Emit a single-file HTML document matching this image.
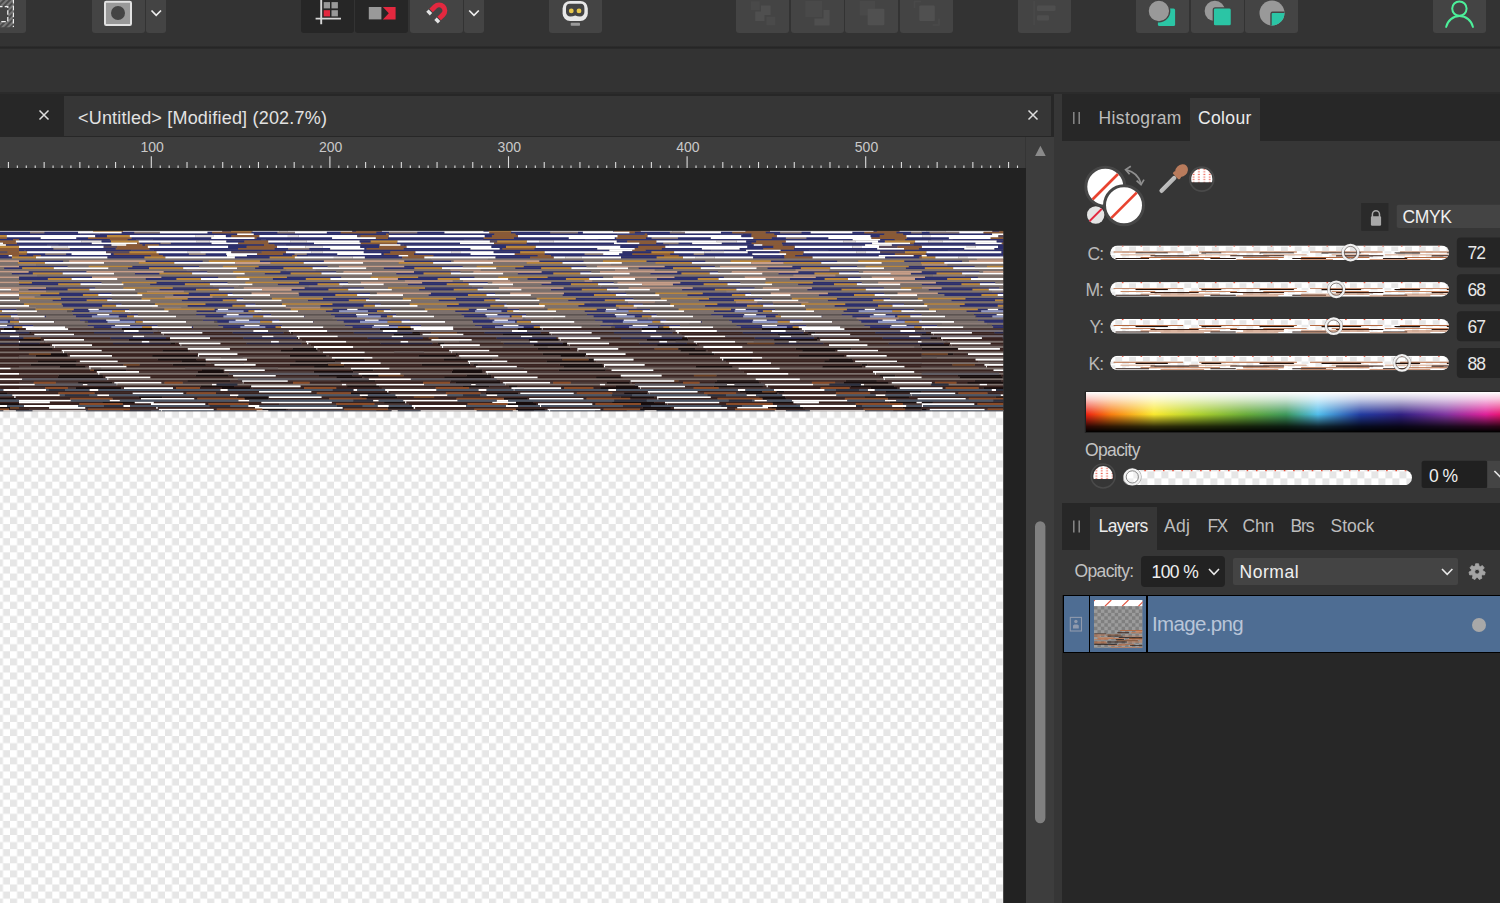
<!DOCTYPE html>
<html>
<head>
<meta charset="utf-8">
<title>Affinity Photo</title>
<style>
*{box-sizing:border-box;margin:0;padding:0}
html,body{width:1500px;height:903px;overflow:hidden;background:#333;font-family:"Liberation Sans",sans-serif;color:#ddd}
.abs{position:absolute}
#root{position:relative;width:1500px;height:903px;overflow:hidden;background:#333}
.btn{position:absolute;top:-3px;height:36px;width:53px;background:#444;border-radius:3px}
.btn.dark{background:#262626}
.btn.dd{width:20px}
.btn svg{position:absolute;left:0;top:3px}
.t{position:absolute;white-space:nowrap;line-height:1}
</style>
</head>
<body>
<div id="root">

<!-- ===== top toolbar ===== -->
<div class="abs" id="toolbar" style="left:0;top:0;width:1500px;height:47px;background:#333;overflow:hidden">
<!-- toolbar buttons -->
<div class="btn" style="left:-27px"></div>
<div class="btn" style="left:92px;width:52.5px"></div><div class="btn dd" style="left:146px;width:19.5px"></div>
<div class="btn dark" style="left:300.5px"></div><div class="btn dark" style="left:355px"></div>
<div class="btn" style="left:409.5px"></div><div class="btn dd" style="left:464px;width:19.5px"></div>
<div class="btn" style="left:549px;width:52.5px"></div>
<div class="btn" style="left:736px"></div><div class="btn" style="left:790.5px"></div><div class="btn" style="left:845px"></div><div class="btn" style="left:899.5px"></div>
<div class="btn" style="left:1018px"></div>
<div class="btn" style="left:1136px"></div><div class="btn" style="left:1190.5px"></div><div class="btn" style="left:1245px"></div>
<div class="btn" style="left:1433px"></div>
<svg class="abs" style="left:0;top:0" width="1500" height="47" viewBox="0 0 1500 47">
<defs>
<pattern id="hatch" width="4" height="4" patternUnits="userSpaceOnUse" patternTransform="rotate(-45)"><rect width="4" height="4" fill="#4a4a4a"/><rect width="4" height="2" fill="#787878"/></pattern>
<clipPath id="cN"><circle cx="1272" cy="13" r="12.5"/></clipPath>
</defs>
<!-- A marquee -->
<path d="M0,0H14V27.3H0V22.3H8.3V6H0Z" fill="url(#hatch)"/>
<path d="M-2,6.6H7.8V21.6H-2" fill="none" stroke="#eee" stroke-width="1.3" stroke-dasharray="4.5 2.2"/>
<path d="M13.4,-1V27" fill="none" stroke="#eee" stroke-width="1.2" stroke-dasharray="4.5 2.2"/>
<!-- B -->
<rect x="105" y="1.8" width="26" height="23.2" rx="1.2" fill="#999" stroke="#e2e2e2" stroke-width="2"/>
<circle cx="118" cy="13" r="7" fill="#444"/>
<path d="M151.5,10.5L156.2,15.3L161,10.5" fill="none" stroke="#eee" stroke-width="1.7"/>
<!-- C -->
<path d="M321.2,0V24.2M315.6,18.6H341" stroke="#d6d6d6" stroke-width="1.9" fill="none"/>
<rect x="323.7" y="2.1" width="6.3" height="6.3" fill="#999"/><rect x="331.5" y="2.1" width="6.4" height="6.3" fill="#999"/>
<rect x="323.7" y="10.2" width="6.3" height="6.2" fill="#e3283f"/><rect x="331.5" y="10.2" width="6.4" height="6.2" fill="#999"/>
<!-- D -->
<rect x="368.8" y="7" width="12.6" height="12.4" fill="#999"/>
<path d="M382.9,7H395.6V19.4H382.9L388.8,13.2Z" fill="#e3283f"/>
<!-- E magnet -->
<g transform="translate(439.1,10.6) rotate(45)"><path d="M-5.7,5.6V0A5.7,5.7 0 0 1 5.7,0V5.6" stroke="#e3283f" stroke-width="5" fill="none"/><path d="M-5.7,6.6V10M5.7,6.6V10" stroke="#e4e4e4" stroke-width="5" fill="none"/></g>
<path d="M469.2,10.5L474,15.3L478.8,10.5" fill="none" stroke="#eee" stroke-width="1.7"/>
<!-- F robot -->
<rect x="562.6" y="0.9" width="25.2" height="20" rx="7.5" fill="#e8e8e8"/>
<path d="M569.5,3.8H581A3.5,4.5 0 0 1 584.4,8.3V12A4.5,4.5 0 0 1 580,16.6Q577.5,16.6 575.2,15.5Q573,16.6 570.4,16.6A4.5,4.5 0 0 1 566,12V8.3A3.5,4.5 0 0 1 569.5,3.8Z" fill="#444"/>
<circle cx="571.3" cy="10.9" r="2.4" fill="#e8c84c"/><circle cx="579" cy="10.9" r="2.4" fill="#e8c84c"/>
<rect x="570.7" y="22.8" width="9.3" height="2.9" rx="0.6" fill="#9a9a9a"/>
<!-- G..K disabled -->
<rect x="750.8" y="1.2" width="8.8" height="8.8" fill="#494949"/><rect x="766.4" y="16.8" width="8.8" height="8.4" fill="#4a4a4a"/>
<path d="M761,5.6H770.6V15H764.5V21H755.2V11.5H761Z" fill="#4f4f4f"/>
<rect x="805.2" y="1" width="16.8" height="16" fill="#494949"/><path d="M823.5,10H829.6V25.6H814.4V18.5H823.5Z" fill="#4f4f4f"/>
<rect x="859.6" y="1" width="15.4" height="14.5" fill="#494949"/><rect x="867.6" y="8.8" width="16.8" height="16.5" rx="1" fill="#505050"/>
<path d="M914.5,8V1.5H921M932.5,25H939V18.5" fill="none" stroke="#494949" stroke-width="1.5"/><rect x="919.3" y="5.6" width="15.5" height="15.4" rx="1" fill="#505050"/>
<path d="M1034,1V25" stroke="#494949" stroke-width="1.6"/><rect x="1037" y="5.6" width="18.5" height="5.4" rx="1" fill="#4e4e4e"/><rect x="1037" y="15.2" width="12" height="5.3" rx="1" fill="#4e4e4e"/>
<!-- L -->
<rect x="1157.9" y="8.5" width="17.2" height="17.4" rx="1.5" fill="#2bc5a5"/>
<circle cx="1158.9" cy="11" r="10.8" fill="#999" stroke="#444" stroke-width="1.3"/>
<!-- M -->
<circle cx="1214.8" cy="11" r="10.2" fill="#999"/>
<rect x="1213.3" y="7.9" width="18.1" height="18" rx="2" fill="#2bc5a5" stroke="#444" stroke-width="1.3"/>
<!-- N -->
<circle cx="1272" cy="13" r="12.5" fill="#999"/>
<g clip-path="url(#cN)"><rect x="1271" y="12.3" width="20" height="20" rx="1.5" fill="#2bc5a5" stroke="#444" stroke-width="1.4"/></g>
<!-- O -->
<circle cx="1459.4" cy="8.6" r="7.2" fill="none" stroke="#4cf09a" stroke-width="2"/>
<path d="M1446.2,26.9A13.65,13.65 0 0 1 1472.9,26.9" fill="none" stroke="#4cf09a" stroke-width="2" stroke-linecap="round"/>
</svg>
</div>
<div class="abs" style="left:0;top:46px;width:1500px;height:3px;background:linear-gradient(#2e2e2e,#262626 50%,#2c2c2c)"></div>
<!-- context toolbar -->
<div class="abs" style="left:0;top:49px;width:1500px;height:44px;background:#333"></div>

<!-- ===== document tab bar ===== -->
<div class="abs" style="left:0;top:92px;width:1500px;height:46px;background:#272727"></div>
<div class="abs" style="left:0;top:92px;width:1500px;height:2px;background:#2b2b2b"></div>
<div class="abs" id="doctab" style="left:64px;top:96px;width:987px;height:40px;background:#363636"></div>


<svg class="abs" style="left:38px;top:109.3px" width="12" height="12"><path d="M1.5,1.5L10.5,10.5M10.5,1.5L1.5,10.5" stroke="#dedede" stroke-width="1.5" fill="none"/></svg>
<svg class="abs" style="left:1026.5px;top:109.3px" width="12" height="12"><path d="M1.5,1.5L10.5,10.5M10.5,1.5L1.5,10.5" stroke="#dedede" stroke-width="1.5" fill="none"/></svg>
<div class="t" id="doctitle" style="left:78px;top:108.5px;font-size:18px;letter-spacing:0.2px;color:#e2e2e2">&lt;Untitled&gt; [Modified] (202.7%)</div>
<!-- ruler -->
<div class="abs" id="ruler" style="left:0;top:137px;width:1026px;height:31px;background:#3d3d3d;overflow:hidden"><svg class="abs" style="left:0;top:0" width="1026" height="31"><path d="M-0.51,28.6V31M8.42,25.0V31M17.35,28.6V31M26.28,28.6V31M35.21,28.6V31M44.14,25.0V31M53.07,28.6V31M62.00,28.6V31M70.93,28.6V31M79.86,25.0V31M88.79,28.6V31M97.72,28.6V31M106.65,28.6V31M115.58,25.0V31M124.51,28.6V31M133.44,28.6V31M142.37,28.6V31M151.30,19.2V31M160.23,28.6V31M169.16,28.6V31M178.09,28.6V31M187.02,25.0V31M195.95,28.6V31M204.88,28.6V31M213.81,28.6V31M222.74,25.0V31M231.67,28.6V31M240.60,28.6V31M249.53,28.6V31M258.46,25.0V31M267.39,28.6V31M276.32,28.6V31M285.25,28.6V31M294.18,25.0V31M303.11,28.6V31M312.04,28.6V31M320.97,28.6V31M329.90,19.2V31M338.83,28.6V31M347.76,28.6V31M356.69,28.6V31M365.62,25.0V31M374.55,28.6V31M383.48,28.6V31M392.41,28.6V31M401.34,25.0V31M410.27,28.6V31M419.20,28.6V31M428.13,28.6V31M437.06,25.0V31M445.99,28.6V31M454.92,28.6V31M463.85,28.6V31M472.78,25.0V31M481.71,28.6V31M490.64,28.6V31M499.57,28.6V31M508.50,19.2V31M517.43,28.6V31M526.36,28.6V31M535.29,28.6V31M544.22,25.0V31M553.15,28.6V31M562.08,28.6V31M571.01,28.6V31M579.94,25.0V31M588.87,28.6V31M597.80,28.6V31M606.73,28.6V31M615.66,25.0V31M624.59,28.6V31M633.52,28.6V31M642.45,28.6V31M651.38,25.0V31M660.31,28.6V31M669.24,28.6V31M678.17,28.6V31M687.10,19.2V31M696.03,28.6V31M704.96,28.6V31M713.89,28.6V31M722.82,25.0V31M731.75,28.6V31M740.68,28.6V31M749.61,28.6V31M758.54,25.0V31M767.47,28.6V31M776.40,28.6V31M785.33,28.6V31M794.26,25.0V31M803.19,28.6V31M812.12,28.6V31M821.05,28.6V31M829.98,25.0V31M838.91,28.6V31M847.84,28.6V31M856.77,28.6V31M865.70,19.2V31M874.63,28.6V31M883.56,28.6V31M892.49,28.6V31M901.42,25.0V31M910.35,28.6V31M919.28,28.6V31M928.21,28.6V31M937.14,25.0V31M946.07,28.6V31M955.00,28.6V31M963.93,28.6V31M972.86,25.0V31M981.79,28.6V31M990.72,28.6V31M999.65,28.6V31M1008.58,25.0V31M1017.51,28.6V31" stroke="#dcdcdc" stroke-width="1.1" fill="none"/></svg><div class="t" style="left:132.1px;top:2.7px;width:40px;text-align:center;font-size:14px;color:#c9c9c9">100</div><div class="t" style="left:310.7px;top:2.7px;width:40px;text-align:center;font-size:14px;color:#c9c9c9">200</div><div class="t" style="left:489.3px;top:2.7px;width:40px;text-align:center;font-size:14px;color:#c9c9c9">300</div><div class="t" style="left:667.9px;top:2.7px;width:40px;text-align:center;font-size:14px;color:#c9c9c9">400</div><div class="t" style="left:846.5px;top:2.7px;width:40px;text-align:center;font-size:14px;color:#c9c9c9">500</div></div>
<!-- canvas bg -->
<div class="abs" id="canvas" style="left:0;top:168px;width:1026px;height:735px;background:#222;overflow:hidden"><!--GLITCH--><svg class="abs" style="left:0;top:0" width="1004" height="735" viewBox="0 168 1004 735"><defs><pattern id="ck" x="-4.04" y="411" width="14.086" height="14.134" patternUnits="userSpaceOnUse"><rect width="14.1" height="14.2" fill="#fff"/><rect x="7.043" width="7.043" height="7.067" fill="#e6e6e6"/><rect y="7.067" width="7.043" height="7.067" fill="#e6e6e6"/></pattern></defs><rect x="0" y="410" width="1003.2" height="494" fill="url(#ck)"/><rect x="0" y="231" width="1003.2" height="180.3" fill="#6f6462"/><path d="M0.0,231.42H19.0M19.0,231.42H93.2M123.0,231.42H222.3M252.4,231.42H279.3M287.7,231.42H352.3M381.8,231.42H483.6M511.2,231.42H613.2M640.6,231.42H672.3M681.1,231.42H745.6M770.0,231.42H873.6M899.4,231.42H921.7M921.7,231.42H926.1M945.7,231.42H992.4" stroke="#ffffff" stroke-width="0.84" fill="none"/><path d="M93.2,231.42H123.0M231.0,231.42H252.4M488.6,231.42H511.2" stroke="#bb873c" stroke-width="0.84" fill="none"/><path d="M222.3,231.42H231.0M745.6,231.42H746.1" stroke="#5a4a5a" stroke-width="0.84" fill="none"/><path d="M279.3,231.42H287.7M672.3,231.42H681.1M926.1,231.42H945.7" stroke="#e4e0de" stroke-width="0.84" fill="none"/><path d="M352.3,231.42H356.1M483.6,231.42H488.6M613.2,231.42H614.2M873.6,231.42H876.9M992.4,231.42H999.2" stroke="#2c2f6d" stroke-width="0.84" fill="none"/><path d="M356.1,231.42H381.8M614.2,231.42H640.6M746.1,231.42H770.0M876.9,231.42H899.4M999.2,231.42H1003.2" stroke="#8a5a36" stroke-width="0.84" fill="none"/><path d="M0.0,232.65H1.1M1.1,232.65H19.0M19.0,232.65H30.1M44.3,232.65H78.1M121.6,232.65H124.1M124.1,232.65H134.4M207.4,232.65H212.2M251.3,232.65H253.5M253.5,232.65H277.5M326.8,232.65H340.8M376.2,232.65H382.9M382.9,232.65H389.0M417.2,232.65H444.5M511.0,232.65H512.3M512.3,232.65H550.3M577.9,232.65H582.9M634.7,232.65H641.7M641.7,232.65H669.9M720.9,232.65H732.3M765.5,232.65H771.1M771.1,232.65H780.2M801.4,232.65H810.7M852.3,232.65H864.4M896.3,232.65H900.5M900.5,232.65H911.2M921.7,232.65H929.7M6.7,238.01H10.0M10.0,238.01H19.0M19.0,238.01H40.7M76.2,238.01H88.0M131.4,238.01H133.0M133.0,238.01H211.3M256.4,238.01H262.4M262.4,238.01H332.1M388.0,238.01H391.8M391.8,238.01H483.8M513.9,238.01H521.2M521.2,238.01H568.8M614.7,238.01H616.3M645.9,238.01H650.6M650.6,238.01H651.7M677.9,238.01H710.8M771.6,238.01H780.0M780.0,238.01H785.9M806.3,238.01H828.4M906.8,238.01H909.4M909.4,238.01H921.7M921.7,238.01H948.9M17.0,243.37H18.9M19.0,243.37H91.8M139.4,243.37H141.9M141.9,243.37H160.6M170.8,243.37H211.6M268.4,243.37H271.3M271.3,243.37H314.0M396.8,243.37H400.7M400.7,243.37H460.0M526.4,243.37H530.1M530.1,243.37H614.0M656.1,243.37H659.5M659.5,243.37H663.4M678.4,243.37H692.2M721.7,243.37H751.7M781.9,243.37H788.9M788.9,243.37H872.1M913.7,243.37H918.3M918.3,243.37H921.7M921.7,243.37H975.5M19.0,248.73H21.4M21.4,248.73H53.5M69.6,248.73H115.8M149.3,248.73H150.8M150.8,248.73H238.0M274.4,248.73H280.2M280.2,248.73H288.0M309.2,248.73H330.2M364.3,248.73H366.6M403.5,248.73H409.6M409.6,248.73H470.5M499.6,248.73H502.5M534.3,248.73H539.0M539.0,248.73H597.3M661.6,248.73H668.4M668.4,248.73H701.9M739.5,248.73H763.4M794.0,248.73H797.8M797.8,248.73H877.2M918.8,248.73H921.7M921.7,248.73H964.3M994.3,248.73H1003.2M26.5,254.09H30.3M30.3,254.09H45.3M66.1,254.09H71.6M110.8,254.09H113.8M158.6,254.09H159.7M159.7,254.09H188.9M205.5,254.09H226.3M282.8,254.09H289.1M289.1,254.09H294.7M306.6,254.09H337.3M381.3,254.09H383.8M414.0,254.09H418.5M418.5,254.09H470.6M544.5,254.09H547.9M547.9,254.09H584.7M619.1,254.09H632.4M670.1,254.09H677.3M677.3,254.09H693.8M704.1,254.09H752.4M802.8,254.09H806.7M806.7,254.09H894.9M925.5,254.09H929.7M929.7,254.09H1003.0" stroke="#2c2f6d" stroke-width="2.0" fill="none"/><path d="M30.1,232.65H44.3M134.4,232.65H159.9M277.5,232.65H295.0M389.0,232.65H417.2M550.3,232.65H577.9M669.9,232.65H685.0M780.2,232.65H801.4M911.2,232.65H921.7M929.7,232.65H959.3M651.7,238.01H677.9M785.9,238.01H806.3M160.6,243.37H170.8M663.4,243.37H678.4M53.5,248.73H69.6M288.0,248.73H309.2M45.3,254.09H66.1M188.9,254.09H205.5M294.7,254.09H306.6M584.7,254.09H603.2M693.8,254.09H704.1" stroke="#8a7a78" stroke-width="2.0" fill="none"/><path d="M78.1,232.65H121.6M159.9,232.65H207.4M295.0,232.65H326.8M444.5,232.65H489.4M582.9,232.65H629.6M685.0,232.65H720.9M810.7,232.65H852.3M959.3,232.65H983.6M40.7,238.01H76.2M211.3,238.01H254.7M332.1,238.01H375.9M568.8,238.01H614.7M710.8,238.01H753.5M828.4,238.01H871.5M948.9,238.01H990.7M0.0,243.37H3.0M91.8,243.37H137.0M211.6,243.37H238.2M314.0,243.37H360.8M460.0,243.37H494.0M614.0,243.37H639.5M692.2,243.37H721.7M872.1,243.37H910.1M975.5,243.37H1001.8M330.2,248.73H364.3M470.5,248.73H499.6M597.3,248.73H634.8M701.9,248.73H739.5M877.2,248.73H904.2M964.3,248.73H994.3M71.6,254.09H110.8M226.3,254.09H257.2M337.3,254.09H381.3M470.6,254.09H514.8M603.2,254.09H619.1M752.4,254.09H786.3M26.0,329.03H68.2M413.5,329.03H453.4M542.4,329.03H542.9M801.7,329.03H844.6M924.3,329.03H924.7M34.2,334.39H74.0M162.7,334.39H163.6M422.4,334.39H463.5M551.3,334.39H551.8M811.2,334.39H850.3M933.1,334.39H933.6M44.0,339.75H84.0M431.3,339.75H471.8M559.7,339.75H560.7M820.1,339.75H859.4M942.1,339.75H942.5M52.0,345.11H92.1M180.4,345.11H181.4M440.2,345.11H479.9M569.1,345.11H569.6M829.0,345.11H867.6M951.1,345.11H951.4M61.6,350.47H101.8M449.1,350.47H489.4M577.3,350.47H578.5M837.3,350.47H878.1M69.8,355.83H112.0M197.9,355.83H199.2M459.1,355.83H498.4M846.4,355.83H886.8M79.7,361.19H117.8M467.7,361.19H507.4M855.1,361.19H897.0M88.7,366.55H126.6M475.8,366.55H516.9M604.0,366.55H605.2M865.3,366.55H904.6M986.1,366.55H987.0M96.8,371.91H139.1M485.6,371.91H527.3M872.9,371.91H914.4M105.4,377.27H150.5M494.1,377.27H537.7M882.9,377.27H921.7M114.2,382.63H161.5M242.7,382.63H243.6M503.1,382.63H550.2M891.5,382.63H921.7M921.7,382.63H931.9M123.9,387.99H173.0M511.3,387.99H561.2M640.0,387.99H640.7M899.7,387.99H921.7M921.7,387.99H942.7M132.5,393.35H183.5M520.2,393.35H573.8M649.1,393.35H649.6M909.8,393.35H921.7M921.7,393.35H955.4M140.9,398.71H194.4M529.1,398.71H583.6M657.2,398.71H658.5M917.6,398.71H921.7M921.7,398.71H965.8M150.9,404.07H205.5M538.0,404.07H592.5M667.0,404.07H667.4M921.7,404.07H974.5M158.8,409.43H213.8M547.4,409.43H600.6M929.6,409.43H984.7" stroke="#ffffff" stroke-width="2.0" fill="none"/><path d="M212.2,232.65H251.3M340.8,232.65H376.2M489.4,232.65H511.0M629.6,232.65H634.7M732.3,232.65H765.5M864.4,232.65H896.3M983.6,232.65H1003.2M0.0,238.01H6.7M88.0,238.01H131.4M254.7,238.01H256.4M375.9,238.01H388.0M483.8,238.01H513.9M616.3,238.01H645.9M753.5,238.01H771.6M871.5,238.01H906.8M990.7,238.01H1003.2M3.0,243.37H17.0M137.0,243.37H139.4M238.2,243.37H268.4M360.8,243.37H396.8M494.0,243.37H526.4M639.5,243.37H656.1M751.7,243.37H781.9M910.1,243.37H913.7M1001.8,243.37H1003.2M0.0,248.73H19.0M115.8,248.73H149.3M238.0,248.73H274.4M366.6,248.73H403.5M502.5,248.73H534.3M634.8,248.73H661.6M763.4,248.73H794.0M904.2,248.73H918.8M0.0,254.09H19.0M19.0,254.09H26.5M113.8,254.09H158.6M257.2,254.09H282.8M383.8,254.09H414.0M514.8,254.09H544.5M632.4,254.09H670.1M786.3,254.09H802.8M894.9,254.09H921.7M921.7,254.09H925.5" stroke="#8a5a36" stroke-width="2.0" fill="none"/><path d="M0.0,234.38H4.2M4.2,234.38H19.0M19.0,234.38H80.2M99.8,234.38H127.2M127.2,234.38H237.2M253.7,234.38H256.6M256.6,234.38H386.0M388.5,234.38H494.4M515.6,234.38H617.7M647.1,234.38H720.2M742.4,234.38H751.6M774.2,234.38H884.4M903.1,234.38H903.6M903.6,234.38H921.7M921.7,234.38H992.1M0.0,239.73H13.1M19.0,239.73H109.9M127.4,239.73H136.1M152.5,239.73H261.6M265.5,239.73H394.9M394.9,239.73H464.6M482.9,239.73H524.3M524.3,239.73H585.6M598.1,239.73H653.7M653.7,239.73H783.1M783.1,239.73H852.7M880.1,239.73H894.8M905.1,239.73H912.5M912.5,239.73H921.7M921.7,239.73H931.7M952.3,239.73H1003.2M5.9,245.09H19.0M19.0,245.09H47.3M58.2,245.09H111.5M142.3,245.09H145.0M158.8,245.09H264.0M285.8,245.09H379.7M403.8,245.09H533.2M533.2,245.09H662.6M662.6,245.09H669.4M689.9,245.09H753.8M782.5,245.09H792.0M792.0,245.09H865.1M891.8,245.09H892.7M913.3,245.09H921.4M921.7,245.09H1003.2M19.0,250.45H24.5M25.4,250.45H131.4M153.9,250.45H283.3M283.3,250.45H412.7M412.7,250.45H542.1M542.1,250.45H609.4M645.5,250.45H671.5M671.5,250.45H711.4M723.7,250.45H746.1M780.5,250.45H800.9M800.9,250.45H809.0M828.2,250.45H921.7M921.7,250.45H923.9M923.9,250.45H947.9M963.5,250.45H1003.2M0.0,255.81H8.7M19.0,255.81H33.4M40.9,255.81H150.9M162.8,255.81H227.0M246.9,255.81H292.2M297.0,255.81H308.3M337.7,255.81H398.7M433.3,255.81H537.8M551.0,255.81H664.3M678.6,255.81H680.4M680.4,255.81H754.6M781.3,255.81H784.0M795.1,255.81H809.8M809.8,255.81H878.8M913.6,255.81H921.7M926.7,255.81H932.8M932.8,255.81H1000.1M19.0,261.17H42.3M42.3,261.17H63.3M145.5,261.17H171.7M171.7,261.17H202.8M259.9,261.17H301.1M301.1,261.17H323.9M404.2,261.17H430.5M430.5,261.17H451.2M539.3,261.17H559.9M559.9,261.17H583.7M646.4,261.17H689.3M689.3,261.17H705.5M770.8,261.17H818.7M818.7,261.17H837.3M904.2,261.17H921.7M921.7,261.17H941.7M941.7,261.17H962.2M19.0,266.53H51.2M51.2,266.53H67.7M132.3,266.53H180.6M180.6,266.53H199.2M258.6,266.53H310.0M310.0,266.53H327.7M404.2,266.53H439.4M439.4,266.53H462.8M523.7,266.53H568.8M568.8,266.53H586.6M664.6,266.53H698.2M698.2,266.53H714.9M792.3,266.53H827.6M827.6,266.53H857.1M908.7,266.53H921.7M921.7,266.53H950.6M950.6,266.53H974.8M28.6,271.89H60.1M60.1,271.89H86.5M163.6,271.89H189.5M189.5,271.89H207.3M280.4,271.89H318.9M318.9,271.89H336.3M414.0,271.89H448.3M448.3,271.89H460.6M541.6,271.89H577.7M577.7,271.89H591.4M677.2,271.89H707.1M707.1,271.89H718.1M798.3,271.89H836.5M836.5,271.89H858.9M921.7,271.89H959.5M959.5,271.89H979.5M19.2,277.25H69.0M69.0,277.25H92.0M161.3,277.25H198.4M198.4,277.25H218.2M286.9,277.25H327.8M327.8,277.25H341.3M418.1,277.25H457.2M457.2,277.25H474.6M547.5,277.25H586.6M586.6,277.25H603.3M674.4,277.25H716.0M716.0,277.25H723.9M815.7,277.25H845.4M845.4,277.25H860.8M925.0,277.25H968.4M968.4,277.25H977.9M31.9,282.61H77.9M77.9,282.61H101.6M156.5,282.61H207.3M207.3,282.61H227.6M298.9,282.61H336.7M336.7,282.61H348.0M422.1,282.61H466.1M466.1,282.61H487.8M551.2,282.61H595.5M595.5,282.61H613.8M680.3,282.61H724.9M724.9,282.61H740.4M812.8,282.61H854.3M854.3,282.61H861.8M935.9,282.61H977.3M977.3,282.61H995.3M46.0,287.97H86.8M86.8,287.97H95.2M172.7,287.97H216.2M216.2,287.97H234.2M304.6,287.97H345.6M345.6,287.97H364.1M425.0,287.97H475.0M475.0,287.97H483.3M563.6,287.97H604.4M604.4,287.97H618.5M692.7,287.97H733.8M733.8,287.97H754.7M811.9,287.97H863.2M863.2,287.97H883.9M941.6,287.97H986.2M986.2,287.97H999.4M59.2,293.33H95.7M95.7,293.33H111.6M188.7,293.33H225.1M225.1,293.33H232.7M298.6,293.33H354.5M354.5,293.33H370.1M430.9,293.33H483.9M483.9,293.33H495.0M563.9,293.33H613.3M613.3,293.33H626.5M702.7,293.33H742.7M742.7,293.33H751.0M827.9,293.33H872.1M872.1,293.33H884.4M937.8,293.33H995.1M995.1,293.33H1003.2M61.0,298.69H104.6M104.6,298.69H111.9M187.6,298.69H234.0M234.0,298.69H243.4M323.0,298.69H363.4M363.4,298.69H369.1M455.9,298.69H492.8M492.8,298.69H499.8M575.7,298.69H622.2M622.2,298.69H633.6M709.0,298.69H751.6M751.6,298.69H762.2M836.9,298.69H881.0M881.0,298.69H890.5M965.4,298.69H1003.2M61.6,304.05H113.5M113.5,304.05H121.6M205.4,304.05H242.9M242.9,304.05H255.4M332.4,304.05H372.3M372.3,304.05H380.8M458.7,304.05H501.7M501.7,304.05H506.6M584.3,304.05H631.1M631.1,304.05H642.8M717.3,304.05H760.5M760.5,304.05H773.3M845.2,304.05H889.9M889.9,304.05H904.0M964.6,304.05H1003.2M0.0,309.41H16.6M73.7,309.41H88.4M98.7,309.41H122.4M122.4,309.41H129.2M214.5,309.41H217.8M228.1,309.41H251.8M251.8,309.41H261.6M332.5,309.41H347.2M357.5,309.41H381.2M381.2,309.41H390.8M468.7,309.41H476.6M486.9,309.41H510.6M510.6,309.41H519.2M596.6,309.41H606.0M616.3,309.41H640.0M640.0,309.41H650.2M731.0,309.41H735.4M745.7,309.41H769.4M769.4,309.41H775.0M846.9,309.41H864.8M875.1,309.41H898.8M898.8,309.41H914.4M977.8,309.41H987.8M998.1,309.41H1003.2M0.0,314.77H8.3M8.3,314.77H17.7M72.8,314.77H97.3M109.2,314.77H131.3M131.3,314.77H137.9M196.1,314.77H226.7M238.6,314.77H260.7M260.7,314.77H271.3M331.0,314.77H356.1M368.0,314.77H390.1M390.1,314.77H396.1M461.3,314.77H485.5M497.4,314.77H519.5M519.5,314.77H526.0M586.9,314.77H614.9M626.8,314.77H648.9M648.9,314.77H656.7M711.1,314.77H744.3M756.2,314.77H778.3M841.4,314.77H873.7M885.6,314.77H907.7M907.7,314.77H921.7M973.9,314.77H996.7M0.0,320.13H17.2M17.2,320.13H19.0M19.0,320.13H19.9M79.8,320.13H106.2M119.7,320.13H140.2M140.2,320.13H143.2M202.7,320.13H235.6M249.1,320.13H269.6M269.6,320.13H279.1M336.8,320.13H365.0M378.5,320.13H399.0M399.0,320.13H410.0M472.0,320.13H494.4M507.9,320.13H528.4M528.4,320.13H530.7M595.1,320.13H623.8M637.3,320.13H657.8M657.8,320.13H666.2M728.8,320.13H753.2M766.7,320.13H787.2M787.2,320.13H802.7M858.5,320.13H882.6M896.1,320.13H916.6M916.6,320.13H921.7M977.6,320.13H1003.2M7.1,325.49H19.0M19.0,325.49H19.7M19.7,325.49H33.4M87.4,325.49H115.1M130.1,325.49H149.1M149.1,325.49H157.7M218.2,325.49H244.5M259.5,325.49H278.5M278.5,325.49H282.2M344.8,325.49H373.9M388.9,325.49H407.9M407.9,325.49H421.1M475.0,325.49H503.3M518.3,325.49H537.3M537.3,325.49H540.0M600.2,325.49H632.7M647.7,325.49H666.7M666.7,325.49H680.1M736.3,325.49H762.1M777.1,325.49H796.1M796.1,325.49H806.4M864.2,325.49H891.5M906.5,325.49H921.7M921.7,325.49H937.2M991.8,325.49H1003.2" stroke="#2c2f6d" stroke-width="1.65" fill="none"/><path d="M80.2,234.38H99.8M617.7,234.38H644.8M720.2,234.38H742.4M136.1,239.73H152.5M261.6,239.73H265.5M464.6,239.73H482.9M585.6,239.73H598.1M931.7,239.73H952.3M47.3,245.09H58.2M274.4,245.09H285.8M400.4,245.09H403.8M669.4,245.09H689.9M892.7,245.09H913.3M24.5,250.45H25.4M131.4,250.45H153.9M711.4,250.45H723.7M809.0,250.45H828.2M947.9,250.45H963.5M308.3,255.81H337.7M754.6,255.81H781.3M1000.1,255.81H1003.2" stroke="#3d3f78" stroke-width="1.65" fill="none"/><path d="M237.2,234.38H253.7M992.1,234.38H1003.2M852.7,239.73H880.1M0.0,245.09H5.9M111.5,245.09H126.4M379.7,245.09H400.4M753.8,245.09H762.5M865.1,245.09H891.8M609.4,250.45H632.4M746.1,250.45H780.5M8.7,255.81H12.3M227.0,255.81H246.9M398.7,255.81H408.3M878.8,255.81H913.6M921.7,255.81H926.7M88.4,309.41H98.7M217.8,309.41H228.1M347.2,309.41H357.5M476.6,309.41H486.9M606.0,309.41H616.3M735.4,309.41H745.7M864.8,309.41H875.1M987.8,309.41H998.1M97.3,314.77H109.2M226.7,314.77H238.6M356.1,314.77H368.0M485.5,314.77H497.4M614.9,314.77H626.8M744.3,314.77H756.2M873.7,314.77H885.6M996.7,314.77H1003.2M106.2,320.13H119.7M235.6,320.13H249.1M365.0,320.13H378.5M494.4,320.13H507.9M623.8,320.13H637.3M753.2,320.13H766.7M882.6,320.13H896.1M0.0,325.49H7.1M115.1,325.49H130.1M244.5,325.49H259.5M373.9,325.49H388.9M503.3,325.49H518.3M632.7,325.49H647.7M762.1,325.49H777.1M891.5,325.49H906.5" stroke="#ffffff" stroke-width="1.65" fill="none"/><path d="M386.0,234.38H388.5M494.4,234.38H515.4M644.8,234.38H647.1M751.6,234.38H774.2M884.4,234.38H903.1M13.1,239.73H19.0M109.9,239.73H127.4M894.8,239.73H905.1M126.4,245.09H142.3M145.0,245.09H158.8M264.0,245.09H274.4M762.5,245.09H782.5M0.0,250.45H19.0M632.4,250.45H645.5M12.3,255.81H19.0M33.4,255.81H40.9M150.9,255.81H162.8M292.2,255.81H297.0M408.3,255.81H421.6M421.6,255.81H433.3M537.8,255.81H551.0M664.3,255.81H678.6M784.0,255.81H795.1" stroke="#8a5a36" stroke-width="1.65" fill="none"/><path d="M0.0,236.15H6.8M106.9,236.15H129.8M110.9,241.51H138.7M370.5,241.51H397.5M497.1,241.51H526.9M884.7,241.51H915.1M0.0,246.87H19.0M506.0,246.87H535.8M19.0,252.23H27.1M129.3,252.23H156.5M520.1,252.23H544.7M651.3,252.23H674.1M904.9,252.23H921.7M921.7,252.23H926.5M11.8,257.59H19.0M19.0,257.59H36.0M144.3,257.59H165.4M269.5,257.59H294.8M656.5,257.59H683.0M921.7,257.59H935.4M17.6,262.95H19.0M19.0,262.95H44.9M138.5,262.95H174.3M270.4,262.95H303.7M398.4,262.95H433.1M526.4,262.95H562.5M655.2,262.95H691.9M783.5,262.95H821.3M920.8,262.95H921.7M921.7,262.95H944.3M22.1,268.31H53.8M149.0,268.31H183.2M283.3,268.31H312.6M414.2,268.31H442.0M541.1,268.31H571.4M673.0,268.31H700.8M800.8,268.31H830.2M924.7,268.31H953.2M32.7,273.67H62.7M159.3,273.67H192.1M290.5,273.67H321.5M423.4,273.67H450.9M553.2,273.67H580.3M681.3,273.67H709.7M814.3,273.67H839.1M936.4,273.67H962.1M47.7,279.03H71.6M176.3,279.03H201.0M305.7,279.03H330.4M437.5,279.03H459.8M565.9,279.03H589.2M697.6,279.03H718.6M824.5,279.03H848.0M947.1,279.03H971.0M58.1,284.39H80.5M184.8,284.39H209.9M317.4,284.39H339.3M446.6,284.39H468.7M570.9,284.39H598.1M703.5,284.39H727.5M834.0,284.39H856.9M961.3,284.39H979.9M67.5,289.75H89.4M196.0,289.75H218.8M328.3,289.75H348.2M453.6,289.75H477.6M581.7,289.75H607.0M714.8,289.75H736.4M841.4,289.75H865.8M972.3,289.75H988.8M82.8,295.11H98.3M209.8,295.11H227.7M335.2,295.11H357.1M467.9,295.11H486.5M593.9,295.11H615.9M731.8,295.11H745.3M854.0,295.11H874.7M981.3,295.11H997.7M86.5,300.47H107.2M222.6,300.47H236.6M348.7,300.47H366.0M484.1,300.47H495.4M604.7,300.47H624.8M734.0,300.47H754.2M872.7,300.47H883.6M995.0,300.47H1003.2M102.1,305.83H116.1M232.3,305.83H245.5M363.5,305.83H374.9M490.2,305.83H504.3M615.8,305.83H633.7M746.9,305.83H763.1M878.0,305.83H892.5M997.6,305.83H1003.2M0.0,311.19H2.0M112.1,311.19H125.0M248.3,311.19H254.4M377.0,311.19H383.8M507.1,311.19H513.2M628.6,311.19H642.6M762.8,311.19H772.0M892.2,311.19H901.4M0.0,316.55H10.9M127.0,316.55H133.9M252.9,316.55H263.3M386.9,316.55H392.7M511.4,316.55H522.1M641.8,316.55H651.5M775.4,316.55H780.9M897.3,316.55H910.3M9.9,321.91H19.0M135.6,321.91H142.8M260.1,321.91H272.2M387.4,321.91H401.6M516.6,321.91H531.0M652.3,321.91H660.4M777.5,321.91H789.8M904.7,321.91H919.2M13.7,327.27H19.0M19.0,327.27H22.3M142.1,327.27H151.7M275.4,327.27H281.1M398.0,327.27H410.5M533.6,327.27H539.9M663.2,327.27H669.3M792.5,327.27H798.7M914.2,327.27H921.7" stroke="#bb873c" stroke-width="2.1" fill="none"/><path d="M6.8,236.15H19.0M19.0,236.15H95.3M129.8,236.15H195.1M213.3,236.15H225.9M259.2,236.15H287.9M298.5,236.15H357.2M388.6,236.15H484.8M518.0,236.15H617.7M647.4,236.15H741.4M776.8,236.15H870.7M906.2,236.15H921.7M921.7,236.15H922.1M930.2,236.15H998.4M15.7,241.51H19.0M19.0,241.51H81.5M100.2,241.51H101.6M138.7,241.51H196.7M209.8,241.51H226.4M268.1,241.51H290.5M306.7,241.51H359.7M397.5,241.51H489.9M526.9,241.51H539.1M553.8,241.51H616.8M656.3,241.51H716.7M736.6,241.51H746.3M785.7,241.51H843.5M855.4,241.51H878.2M915.1,241.51H921.7M921.7,241.51H928.3M942.4,241.51H996.7M19.0,246.87H51.8M67.3,246.87H103.7M147.6,246.87H228.2M277.0,246.87H305.3M322.3,246.87H360.3M406.4,246.87H491.5M535.8,246.87H620.4M665.2,246.87H747.4M794.6,246.87H852.3M861.2,246.87H879.1M921.7,246.87H966.8M975.7,246.87H998.1M27.1,252.23H106.0M156.5,252.23H187.7M200.1,252.23H231.3M285.9,252.23H311.3M322.4,252.23H363.8M415.3,252.23H451.2M461.0,252.23H493.7M544.7,252.23H622.5M674.1,252.23H704.6M724.0,252.23H747.8M803.5,252.23H856.3M865.4,252.23H880.2M926.5,252.23H1001.5M36.0,257.59H107.5M165.4,257.59H234.9M294.8,257.59H333.9M352.7,257.59H364.9M424.2,257.59H495.6M553.6,257.59H565.5M581.9,257.59H621.0M683.0,257.59H695.7M714.7,257.59H753.2M812.4,257.59H885.2M935.4,257.59H958.5M967.2,257.59H1003.2M44.9,262.95H104.1M174.3,262.95H235.4M303.7,262.95H363.3M433.1,262.95H493.1M562.5,262.95H621.9M691.9,262.95H751.3M821.3,262.95H881.8M944.3,262.95H1003.2M53.8,268.31H108.5M183.2,268.31H237.2M312.6,268.31H366.4M442.0,268.31H496.4M571.4,268.31H628.0M700.8,268.31H756.7M830.2,268.31H884.1M953.2,268.31H1003.2M62.7,273.67H114.1M192.1,273.67H244.8M321.5,273.67H372.1M450.9,273.67H503.3M580.3,273.67H629.8M709.7,273.67H762.5M839.1,273.67H890.8M962.1,273.67H1003.2M71.6,279.03H117.5M201.0,279.03H249.6M330.4,279.03H378.3M459.8,279.03H508.3M589.2,279.03H635.2M718.6,279.03H765.8M848.0,279.03H894.2M971.0,279.03H1003.2M80.5,284.39H123.6M209.9,284.39H252.6M339.3,284.39H383.8M468.7,284.39H513.1M598.1,284.39H642.1M727.5,284.39H772.2M856.9,284.39H900.4M979.9,284.39H1003.2M0.0,289.75H11.2M89.4,289.75H135.4M218.8,289.75H262.0M348.2,289.75H391.9M477.6,289.75H521.6M607.0,289.75H649.9M736.4,289.75H779.5M865.8,289.75H911.5M988.8,289.75H1003.2M0.0,295.11H19.0M98.3,295.11H142.5M227.7,295.11H270.1M357.1,295.11H403.0M486.5,295.11H530.9M615.9,295.11H659.5M745.3,295.11H790.6M874.7,295.11H917.3M997.7,295.11H1003.2M0.0,300.47H19.0M19.0,300.47H20.1M107.2,300.47H150.5M236.6,300.47H281.7M366.0,300.47H411.0M495.4,300.47H539.6M624.8,300.47H666.9M754.2,300.47H798.5M883.6,300.47H921.7M921.7,300.47H922.8M0.0,305.83H19.0M19.0,305.83H29.1M116.1,305.83H157.9M245.5,305.83H285.9M374.9,305.83H417.7M504.3,305.83H544.9M633.7,305.83H674.1M763.1,305.83H805.2M892.5,305.83H921.7M921.7,305.83H927.5M2.0,311.19H19.0M19.0,311.19H36.9M125.0,311.19H168.7M254.4,311.19H298.1M383.8,311.19H427.6M513.2,311.19H556.2M642.6,311.19H684.2M772.0,311.19H814.1M901.4,311.19H921.7M921.7,311.19H936.0M10.9,316.55H19.0M19.0,316.55H44.8M133.9,316.55H176.0M263.3,316.55H304.2M392.7,316.55H434.0M522.1,316.55H565.5M651.5,316.55H693.1M780.9,316.55H821.7M910.3,316.55H921.7M921.7,316.55H945.1M19.0,321.91H54.2M142.8,321.91H186.0M272.2,321.91H313.1M401.6,321.91H445.2M531.0,321.91H574.5M660.4,321.91H700.9M789.8,321.91H832.0M919.2,321.91H921.7M921.7,321.91H954.0M22.3,327.27H65.1M151.7,327.27H191.9M281.1,327.27H323.4M410.5,327.27H453.3M539.9,327.27H581.7M669.3,327.27H713.2M798.7,327.27H840.3M921.7,327.27H963.4M0.8,330.98H15.8M123.8,330.98H138.8M253.2,330.98H268.2M288.6,330.98H327.3M382.6,330.98H397.6M512.0,330.98H527.0M641.4,330.98H656.4M675.4,330.98H716.9M770.8,330.98H785.8M803.8,330.98H804.8M900.2,330.98H915.2M9.7,336.34H19.0M132.7,336.34H144.2M262.1,336.34H273.6M296.5,336.34H337.8M391.5,336.34H403.0M520.9,336.34H532.4M650.3,336.34H661.8M684.3,336.34H725.3M779.7,336.34H791.2M813.4,336.34H813.7M909.1,336.34H920.6M18.6,341.70H19.0M19.0,341.70H20.1M45.7,341.70H46.2M141.6,341.70H149.5M271.0,341.70H278.9M305.8,341.70H346.3M400.4,341.70H408.3M529.8,341.70H537.7M659.2,341.70H667.1M693.6,341.70H735.2M788.6,341.70H796.5M918.0,341.70H921.7M54.2,347.06H55.1M313.9,347.06H353.3M442.0,347.06H443.3M703.2,347.06H742.6M62.9,352.42H64.0M322.8,352.42H364.8M451.2,352.42H452.2M711.6,352.42H752.9M331.7,357.78H372.6M719.9,357.78H762.3M848.8,357.78H849.3M340.6,363.14H380.8M468.7,363.14H470.0M729.1,363.14H771.1M0.0,368.50H10.7M89.3,368.50H90.7M350.7,368.50H389.6M738.4,368.50H779.8M0.0,373.86H19.0M98.1,373.86H99.6M358.4,373.86H400.6M487.1,373.86H487.8M746.6,373.86H788.5M874.9,373.86H876.0M0.0,379.22H19.0M19.0,379.22H22.2M107.2,379.22H108.5M368.7,379.22H410.9M755.5,379.22H799.9M883.5,379.22H884.9M0.0,384.58H19.0M19.0,384.58H34.8M82.7,384.58H87.6M116.5,384.58H117.4M211.9,384.58H216.6M341.7,384.58H346.4M376.2,384.58H424.1M471.1,384.58H475.8M504.9,384.58H505.6M599.7,384.58H605.2M727.0,384.58H734.6M765.1,384.58H813.3M860.8,384.58H864.0M979.4,384.58H987.0M3.3,389.94H19.0M19.0,389.94H46.0M89.4,389.94H98.4M220.3,389.94H227.8M353.4,389.94H357.2M385.1,389.94H436.5M478.4,389.94H486.6M513.6,389.94H514.5M608.2,389.94H616.0M737.8,389.94H745.4M774.0,389.94H824.6M867.8,389.94H874.8M991.6,389.94H996.0M12.2,395.30H19.0M19.0,395.30H59.8M97.2,395.30H109.1M230.0,395.30H238.5M359.6,395.30H367.9M395.3,395.30H447.4M486.4,395.30H497.3M746.5,395.30H756.1M782.2,395.30H836.4M875.6,395.30H885.5M910.8,395.30H911.6M1000.6,395.30H1003.2M19.0,400.66H70.8M109.6,400.66H119.9M238.3,400.66H249.3M373.1,400.66H378.7M403.2,400.66H457.6M496.7,400.66H508.1M754.4,400.66H766.9M791.9,400.66H847.3M885.0,400.66H896.3M0.0,406.02H7.0M23.9,406.02H78.2M123.3,406.02H130.0M248.2,406.02H259.4M377.6,406.02H388.8M411.8,406.02H466.1M505.9,406.02H518.2M539.9,406.02H541.2M762.4,406.02H777.0M800.1,406.02H856.0M892.1,406.02H906.4M921.9,406.02H923.0" stroke="#ffffff" stroke-width="2.1" fill="none"/><path d="M95.3,236.15H106.9M225.9,236.15H231.4M484.8,236.15H491.9M741.4,236.15H751.5M870.7,236.15H879.8M101.6,241.51H110.9M226.4,241.51H244.4M359.7,241.51H370.5M616.8,241.51H627.2M746.3,241.51H756.2M878.2,241.51H884.7M996.7,241.51H1003.2M228.2,246.87H246.7M360.3,246.87H379.1M491.5,246.87H506.0M620.4,246.87H638.4M747.4,246.87H773.5M998.1,246.87H1003.2M363.8,252.23H390.4M493.7,252.23H520.1M622.5,252.23H651.3M747.8,252.23H779.7M1001.5,252.23H1003.2M0.0,257.59H11.8M107.5,257.59H144.3M234.9,257.59H269.5M364.9,257.59H402.2M495.6,257.59H530.1M621.0,257.59H656.5M753.2,257.59H784.5M885.2,257.59H919.5M4.1,268.31H19.0M19.0,268.31H22.1M128.0,268.31H149.0M255.1,268.31H283.3M383.7,268.31H414.2M515.2,268.31H541.1M638.5,268.31H673.0M767.4,268.31H800.8M905.8,268.31H921.7M921.7,268.31H924.7M11.7,273.67H19.0M19.0,273.67H32.7M134.9,273.67H159.3M264.7,273.67H290.5M396.2,273.67H423.4M517.7,273.67H553.2M650.3,273.67H681.3M778.4,273.67H814.3M910.9,273.67H921.7M921.7,273.67H936.4M19.0,279.03H47.7M145.6,279.03H176.3M272.8,279.03H305.7M397.9,279.03H437.5M527.4,279.03H565.9M657.0,279.03H697.6M789.8,279.03H824.5M915.0,279.03H921.7M921.7,279.03H947.1M19.3,284.39H58.1M150.1,284.39H184.8M277.8,284.39H317.4M407.8,284.39H446.6M541.4,284.39H570.9M672.9,284.39H703.5M798.1,284.39H834.0M921.7,284.39H961.3M28.3,289.75H67.5M159.4,289.75H196.0M291.5,289.75H328.3M419.1,289.75H453.6M551.0,289.75H581.7M682.1,289.75H714.8M807.3,289.75H841.4M928.6,289.75H972.3M40.3,295.11H82.8M173.2,295.11H209.8M299.1,295.11H335.2M428.5,295.11H467.9M562.5,295.11H593.9M687.3,295.11H731.8M818.8,295.11H854.0M944.3,295.11H981.3M52.5,300.47H86.5M181.8,300.47H222.6M308.0,300.47H348.7M438.6,300.47H484.1M568.2,300.47H604.7M698.7,300.47H734.0M827.9,300.47H872.7M951.4,300.47H995.0M62.8,305.83H102.1M187.5,305.83H232.3M320.3,305.83H363.5M446.8,305.83H490.2M578.3,305.83H615.8M705.1,305.83H746.9M834.5,305.83H878.0M959.7,305.83H997.6M71.7,311.19H89.5M196.4,311.19H216.2M243.5,311.19H248.3M325.8,311.19H339.1M367.9,311.19H377.0M455.2,311.19H475.1M501.4,311.19H507.1M584.6,311.19H605.5M714.0,311.19H734.7M757.6,311.19H762.8M843.4,311.19H858.7M936.0,311.19H936.4M966.4,311.19H981.2M44.8,316.55H45.9M75.9,316.55H91.9M118.7,316.55H127.0M205.3,316.55H223.5M304.2,316.55H304.7M334.7,316.55H356.9M380.7,316.55H386.9M464.1,316.55H486.8M509.7,316.55H511.4M593.5,316.55H616.2M634.7,316.55H641.8M722.9,316.55H743.2M766.0,316.55H775.4M821.7,316.55H822.3M852.3,316.55H869.9M895.1,316.55H897.3M976.1,316.55H992.4M7.8,321.91H9.9M87.8,321.91H107.6M217.2,321.91H228.9M313.1,321.91H313.6M343.6,321.91H360.0M473.0,321.91H492.6M515.1,321.91H516.6M602.4,321.91H622.9M700.9,321.91H701.8M731.8,321.91H752.5M861.2,321.91H878.0M984.2,321.91H1003.2M12.2,327.27H13.7M93.7,327.27H111.4M191.9,327.27H193.1M223.1,327.27H240.4M265.3,327.27H275.4M352.5,327.27H372.3M481.9,327.27H495.0M523.6,327.27H533.6M614.8,327.27H629.1M658.1,327.27H659.3M740.7,327.27H762.3M786.8,327.27H792.5M870.1,327.27H890.1M993.1,327.27H1003.2" stroke="#2c2f6d" stroke-width="2.1" fill="none"/><path d="M195.1,236.15H213.3M287.9,236.15H298.5M922.1,236.15H930.2M81.5,241.51H100.2M196.7,241.51H209.8M290.5,241.51H306.7M539.1,241.51H553.8M716.7,241.51H736.6M843.5,241.51H855.4M928.3,241.51H942.4M51.8,246.87H67.3M305.3,246.87H322.3M852.3,246.87H861.2M966.8,246.87H975.7M187.7,252.23H200.1M311.3,252.23H322.4M451.2,252.23H461.0M704.6,252.23H724.0M856.3,252.23H865.4M333.9,257.59H352.7M565.5,257.59H581.9M695.7,257.59H714.7M958.5,257.59H967.2" stroke="#e4e0de" stroke-width="2.1" fill="none"/><path d="M231.4,236.15H259.2M360.4,236.15H388.6M491.9,236.15H518.0M617.7,236.15H647.4M751.5,236.15H776.8M879.8,236.15H906.2M0.0,241.51H15.7M244.4,241.51H268.1M627.2,241.51H656.3M756.2,241.51H785.7M117.0,246.87H147.6M246.7,246.87H277.0M379.1,246.87H406.4M638.4,246.87H665.2M773.5,246.87H794.6M897.3,246.87H921.7M7.3,252.23H19.0M261.5,252.23H285.9M390.4,252.23H415.3M779.7,252.23H803.5M402.2,257.59H424.2M530.1,257.59H553.6M784.5,257.59H812.4M919.5,257.59H921.7" stroke="#8a5a36" stroke-width="2.1" fill="none"/><path d="M357.2,236.15H360.4M998.4,236.15H1003.2M489.9,241.51H497.1M103.7,246.87H117.0M879.1,246.87H897.3M0.0,252.23H7.3M106.0,252.23H129.3M231.3,252.23H261.5M880.2,252.23H904.9" stroke="#5a4a5a" stroke-width="2.1" fill="none"/><path d="M0.0,259.45H19.0M19.0,259.45H39.2M39.2,259.45H168.6M168.6,259.45H298.0M298.0,259.45H427.4M427.4,259.45H431.4M487.8,259.45H556.8M556.8,259.45H686.2M686.2,259.45H815.6M815.6,259.45H921.7M921.7,259.45H938.6M938.6,259.45H976.8M0.0,264.81H19.0M36.2,264.81H48.1M48.1,264.81H177.5M177.5,264.81H306.9M306.9,264.81H436.3M436.3,264.81H565.7M565.7,264.81H585.3M610.9,264.81H695.1M695.1,264.81H824.5M824.5,264.81H921.7M947.5,264.81H1003.2M0.0,270.17H19.0M19.0,270.17H57.0M57.0,270.17H186.4M199.9,270.17H286.1M315.8,270.17H445.2M445.2,270.17H450.4M480.7,270.17H574.6M574.6,270.17H615.0M654.8,270.17H704.0M704.0,270.17H795.4M829.5,270.17H833.4M833.4,270.17H921.7M921.7,270.17H956.4M956.4,270.17H1003.2M0.0,275.53H19.0M37.3,275.53H65.9M65.9,275.53H195.3M195.3,275.53H324.7M324.7,275.53H454.1M454.1,275.53H583.5M583.5,275.53H712.9M712.9,275.53H793.3M835.5,275.53H842.3M842.3,275.53H921.7M921.7,275.53H932.8M965.3,275.53H1003.2M0.0,280.89H19.0M19.0,280.89H74.8M74.8,280.89H204.2M204.2,280.89H333.6M333.6,280.89H404.8M452.8,280.89H463.0M510.3,280.89H584.4M592.4,280.89H721.8M721.8,280.89H851.2M851.2,280.89H921.7M921.7,280.89H974.2M974.2,280.89H1003.2M0.0,286.25H19.0M19.0,286.25H83.7M83.7,286.25H213.1M238.6,286.25H308.4M342.5,286.25H471.9M512.8,286.25H600.0M601.3,286.25H730.7M730.7,286.25H860.1M860.1,286.25H921.7M921.7,286.25H983.1M983.1,286.25H1003.2M0.0,291.61H19.0M46.0,291.61H92.6M92.6,291.61H147.0M183.9,291.61H222.0M222.0,291.61H351.4M351.4,291.61H480.8M480.8,291.61H610.2M624.9,291.61H726.2M739.6,291.61H869.0M869.0,291.61H921.7M921.7,291.61H992.0M0.0,296.97H19.0M34.7,296.97H101.5M101.5,296.97H164.7M212.6,296.97H230.9M230.9,296.97H360.3M360.3,296.97H489.7M489.7,296.97H619.1M619.1,296.97H748.5M748.5,296.97H877.9M878.2,296.97H921.7M921.7,296.97H1000.9M1000.9,296.97H1003.2M0.0,302.33H19.0M19.0,302.33H110.3M110.3,302.33H239.7M239.7,302.33H369.1M369.1,302.33H498.5M498.5,302.33H539.9M590.7,302.33H627.9M654.8,302.33H735.9M757.3,302.33H772.7M808.5,302.33H886.7M886.7,302.33H921.7M921.7,302.33H1003.2M36.3,307.69H119.2M119.2,307.69H152.0M181.6,307.69H248.6M248.6,307.69H285.5M320.2,307.69H378.0M378.0,307.69H507.4M544.2,307.69H618.7M636.8,307.69H766.2M766.2,307.69H895.6M895.6,307.69H921.7M921.7,307.69H1003.2M0.0,313.05H5.1M5.1,313.05H19.0M19.0,313.05H128.1M131.1,313.05H226.9M257.5,313.05H386.9M386.9,313.05H516.3M516.3,313.05H645.7M645.7,313.05H775.1M775.1,313.05H904.5M904.5,313.05H921.7M921.7,313.05H1003.2M0.0,318.41H14.0M19.0,318.41H137.0M137.0,318.41H266.4M266.4,318.41H332.3M391.7,318.41H395.8M395.8,318.41H489.4M522.7,318.41H525.2M553.4,318.41H647.8M654.6,318.41H784.0M784.0,318.41H856.4M898.8,318.41H913.4M913.4,318.41H921.7M921.7,318.41H1003.2M0.0,323.77H13.5M19.0,323.77H145.9M145.9,323.77H275.3M275.3,323.77H404.7M404.7,323.77H534.1M534.1,323.77H570.3M613.6,323.77H663.5M689.5,323.77H775.1M792.9,323.77H921.7M921.7,323.77H941.7M987.0,323.77H1003.2" stroke="#7d716d" stroke-width="2.0" fill="none"/><path d="M431.4,259.45H487.8M19.0,264.81H36.2M585.3,264.81H610.9M186.4,270.17H199.9M286.1,270.17H315.8M19.0,275.53H37.3M932.8,275.53H965.3M213.1,286.25H238.6M308.4,286.25H342.5M471.9,286.25H512.8M600.0,286.25H601.3M610.2,291.61H624.9M726.2,291.61H739.6M992.0,291.61H1003.2M877.9,296.97H878.2M539.9,302.33H590.7M0.0,307.69H19.0M19.0,307.69H36.3M152.0,307.69H181.6M128.1,313.05H131.1M226.9,313.05H257.5M332.3,318.41H391.7M525.2,318.41H553.4M647.8,318.41H654.6M13.5,323.77H19.0M570.3,323.77H613.6M663.5,323.77H689.5M775.1,323.77H792.9M941.7,323.77H987.0" stroke="#8a7b76" stroke-width="2.0" fill="none"/><path d="M976.8,259.45H1003.2M921.7,264.81H947.5M450.4,270.17H480.7M615.0,270.17H654.8M795.4,270.17H829.5M793.3,275.53H835.5M404.8,280.89H452.8M463.0,280.89H510.3M584.4,280.89H592.4M19.0,291.61H46.0M147.0,291.61H183.9M19.0,296.97H34.7M164.7,296.97H212.6M627.9,302.33H654.8M735.9,302.33H757.3M772.7,302.33H808.5M285.5,307.69H320.2M507.4,307.69H544.2M618.7,307.69H636.8M14.0,318.41H19.0M489.4,318.41H522.7M856.4,318.41H898.8" stroke="#a88a7c" stroke-width="2.0" fill="none"/><path d="M0.0,261.17H19.0M69.1,261.17H145.5M323.9,261.17H404.2M453.4,261.17H539.3M968.8,261.17H1003.2M0.0,266.53H19.0M338.8,266.53H404.2M596.9,266.53H664.6M719.8,266.53H792.3M0.0,271.89H19.0M19.0,271.89H28.6M86.5,271.89H163.6M343.3,271.89H414.0M473.3,271.89H541.6M600.0,271.89H677.2M731.5,271.89H798.3M863.1,271.89H921.7M983.1,271.89H1003.2M0.0,277.25H19.0M92.0,277.25H161.3M613.0,277.25H674.4M744.5,277.25H815.7M871.5,277.25H921.7M921.7,277.25H925.0M0.0,282.61H19.0M360.8,282.61H422.1M492.2,282.61H551.2M617.3,282.61H680.3M878.1,282.61H921.7M921.7,282.61H935.9M0.0,287.97H19.0M19.0,287.97H46.0M243.6,287.97H304.6M498.8,287.97H563.6M628.5,287.97H692.7M762.7,287.97H811.9M921.7,287.97H941.6M0.0,293.33H19.0M251.4,293.33H298.6M376.7,293.33H430.9M510.1,293.33H563.9M770.6,293.33H827.9M897.4,293.33H921.7M921.7,293.33H937.8" stroke="#c79e88" stroke-width="1.65" fill="none"/><path d="M63.3,261.17H69.1M202.8,261.17H208.8M451.2,261.17H453.4M583.7,261.17H603.0M705.5,261.17H730.7M837.3,261.17H858.2M962.2,261.17H968.8M67.7,266.53H88.6M199.2,266.53H222.9M327.7,266.53H338.8M462.8,266.53H476.6M586.6,266.53H596.9M714.9,266.53H719.8M857.1,266.53H865.5M974.8,266.53H986.9M207.3,271.89H233.2M336.3,271.89H343.3M460.6,271.89H473.3M591.4,271.89H600.0M718.1,271.89H731.5M858.9,271.89H863.1M979.5,271.89H983.1M218.2,277.25H236.4M341.3,277.25H370.6M474.6,277.25H498.2M603.3,277.25H613.0M723.9,277.25H744.5M860.8,277.25H871.5M977.9,277.25H1003.2M101.6,282.61H121.8M227.6,282.61H245.3M348.0,282.61H360.8M487.8,282.61H492.2M613.8,282.61H617.3M740.4,282.61H765.3M861.8,282.61H878.1M995.3,282.61H1003.2M95.2,287.97H123.4M234.2,287.97H243.6M364.1,287.97H388.0M483.3,287.97H498.8M618.5,287.97H628.5M754.7,287.97H762.7M883.9,287.97H900.8M999.4,287.97H1003.2" stroke="#7d716d" stroke-width="1.65" fill="none"/><path d="M208.8,261.17H259.9M603.0,261.17H646.4M730.7,261.17H770.8M858.2,261.17H904.2M88.6,266.53H132.3M222.9,266.53H258.6M476.6,266.53H523.7M865.5,266.53H908.7M986.9,266.53H1003.2M233.2,271.89H280.4M236.4,277.25H286.9M370.6,277.25H418.1M498.2,277.25H547.5M19.0,282.61H31.9M121.8,282.61H156.5M245.3,282.61H298.9M765.3,282.61H812.8M123.4,287.97H172.7M388.0,287.97H425.0M900.8,287.97H921.7M19.0,293.33H59.2M137.3,293.33H188.7M655.2,293.33H702.7M19.0,298.69H61.0M141.4,298.69H187.6M271.8,298.69H323.0M402.7,298.69H455.9M536.5,298.69H575.7M660.6,298.69H709.0M791.6,298.69H836.9M917.7,298.69H921.7M921.7,298.69H965.4M23.9,304.05H61.6M154.9,304.05H205.4M282.0,304.05H332.4M409.6,304.05H458.7M539.0,304.05H584.3M670.2,304.05H717.3M801.2,304.05H845.2M924.1,304.05H964.6M35.3,309.41H73.7M164.2,309.41H214.5M290.6,309.41H332.5M424.7,309.41H468.7M547.4,309.41H596.6M678.5,309.41H731.0M805.9,309.41H846.9M929.0,309.41H977.8" stroke="#bb873c" stroke-width="1.65" fill="none"/><path d="M0.0,262.95H17.6M104.1,262.95H138.5M363.3,262.95H398.4M493.1,262.95H526.4M621.9,262.95H655.2M881.8,262.95H920.8M0.0,268.31H4.1M108.5,268.31H128.0M237.2,268.31H255.1M366.4,268.31H383.7M496.4,268.31H515.2M628.0,268.31H638.5M756.7,268.31H767.4M884.1,268.31H905.8M0.0,273.67H11.7M114.1,273.67H134.9M244.8,273.67H264.7M372.1,273.67H396.2M503.3,273.67H517.7M629.8,273.67H650.3M762.5,273.67H778.4M0.0,279.03H19.0M117.5,279.03H145.6M249.6,279.03H272.8M508.3,279.03H527.4M635.2,279.03H657.0M765.8,279.03H789.8M0.0,284.39H19.0M123.6,284.39H150.1M252.6,284.39H277.8M383.8,284.39H407.8M513.1,284.39H541.4M772.2,284.39H798.1M900.4,284.39H921.7M19.0,289.75H28.3M135.4,289.75H159.4M391.9,289.75H419.1M521.6,289.75H551.0M649.9,289.75H682.1M779.5,289.75H807.3M911.5,289.75H921.7M921.7,289.75H928.6M19.0,295.11H40.3M142.5,295.11H173.2M270.1,295.11H299.1M403.0,295.11H428.5M530.9,295.11H562.5M659.5,295.11H687.3M790.6,295.11H818.8M917.3,295.11H921.7M921.7,295.11H944.3M20.1,300.47H52.5M150.5,300.47H181.8M281.7,300.47H308.0M411.0,300.47H438.6M539.6,300.47H568.2M666.9,300.47H698.7M798.5,300.47H827.9M922.8,300.47H951.4M29.1,305.83H62.8M157.9,305.83H187.5M285.9,305.83H320.3M417.7,305.83H446.8M544.9,305.83H578.3M674.1,305.83H705.1M805.2,305.83H834.5M927.5,305.83H959.7M37.0,311.19H67.0M168.7,311.19H196.4M298.1,311.19H325.8M427.6,311.19H455.2M556.2,311.19H584.6M684.2,311.19H714.0M814.1,311.19H843.4M936.4,311.19H966.4M45.9,316.55H75.9M176.0,316.55H205.3M304.7,316.55H334.7M434.1,316.55H464.1M565.5,316.55H593.5M693.1,316.55H722.9M822.3,316.55H852.3M945.3,316.55H975.3M54.8,321.91H84.8M186.0,321.91H214.2M313.6,321.91H343.6M445.2,321.91H473.0M574.5,321.91H602.4M701.8,321.91H731.8M832.0,321.91H861.2M954.2,321.91H984.2M65.1,327.27H93.7M193.1,327.27H223.1M323.4,327.27H352.5M453.3,327.27H481.9M581.7,327.27H611.3M713.2,327.27H740.7M840.3,327.27H870.1M963.4,327.27H993.1M0.0,341.70H18.6M20.1,341.70H44.0M46.2,341.70H141.6M149.5,341.70H175.6M175.6,341.70H271.0M278.9,341.70H305.0M305.0,341.70H305.8M346.3,341.70H369.7M408.3,341.70H434.4M434.4,341.70H459.0M500.7,341.70H529.8M537.7,341.70H563.8M567.3,341.70H659.2M667.1,341.70H675.7M693.2,341.70H693.6M735.2,341.70H753.8M799.1,341.70H822.6M822.6,341.70H918.0M921.7,341.70H945.6M947.4,341.70H1003.2M0.0,347.06H19.0M19.0,347.06H54.2M55.1,347.06H184.5M184.5,347.06H313.9M353.3,347.06H442.0M443.3,347.06H502.8M547.5,347.06H572.7M572.7,347.06H702.1M702.1,347.06H703.2M742.6,347.06H831.5M831.5,347.06H914.5M921.7,347.06H954.5M954.5,347.06H1003.2M0.0,352.42H19.0M19.0,352.42H62.9M64.0,352.42H193.4M193.4,352.42H322.8M364.8,352.42H394.2M423.8,352.42H451.2M452.2,352.42H581.6M581.6,352.42H711.0M711.0,352.42H711.6M752.9,352.42H840.4M840.4,352.42H921.7M921.7,352.42H963.4M963.4,352.42H1003.2M0.0,357.78H18.5M19.0,357.78H72.9M72.9,357.78H202.3M202.3,357.78H221.1M242.5,357.78H331.7M372.6,357.78H455.8M461.1,357.78H590.5M590.5,357.78H719.9M762.3,357.78H848.8M849.3,357.78H921.7M936.6,357.78H972.3M972.3,357.78H1003.2M0.0,363.14H19.0M19.0,363.14H81.6M81.8,363.14H211.2M244.0,363.14H327.4M380.8,363.14H468.7M470.0,363.14H599.4M599.4,363.14H728.8M771.1,363.14H858.2M858.2,363.14H890.0M921.7,363.14H981.2M981.2,363.14H989.4M10.7,368.50H19.0M19.0,368.50H89.3M101.1,368.50H185.3M220.1,368.50H250.8M278.0,368.50H349.5M349.5,368.50H350.7M389.6,368.50H478.9M523.8,368.50H604.0M608.3,368.50H737.7M737.7,368.50H738.4M779.8,368.50H867.1M867.1,368.50H921.7M921.7,368.50H990.1M990.1,368.50H1003.2M19.0,373.86H98.1M99.6,373.86H229.0M400.6,373.86H487.1M487.8,373.86H617.2M617.2,373.86H746.6M788.5,373.86H874.9M876.0,373.86H921.7M999.0,373.86H1003.2M108.5,379.22H237.9M496.7,379.22H626.1M626.1,379.22H755.5M799.9,379.22H883.5M884.9,379.22H921.7M921.7,379.22H1003.2M117.4,384.58H211.9M237.4,384.58H246.8M246.8,384.58H341.7M346.4,384.58H376.2M505.6,384.58H599.7M605.2,384.58H635.0M764.4,384.58H765.1M813.3,384.58H829.4M864.0,384.58H893.8M893.8,384.58H921.7M921.7,384.58H931.2M948.6,384.58H979.4M987.0,384.58H1003.2" stroke="#7d716d" stroke-width="2.1" fill="none"/><path d="M235.4,262.95H270.4M751.3,262.95H783.5M890.8,273.67H910.9M378.3,279.03H397.9M894.2,279.03H915.0M642.1,284.39H672.9M11.2,289.75H19.0M262.0,289.75H291.5" stroke="#c79e88" stroke-width="2.1" fill="none"/><path d="M111.6,293.33H137.3M232.7,293.33H251.4M370.1,293.33H376.7M495.0,293.33H510.1M626.5,293.33H655.2M751.0,293.33H770.6M884.4,293.33H897.4M0.0,298.69H19.0M111.9,298.69H141.4M243.4,298.69H271.8M369.1,298.69H402.7M499.8,298.69H536.5M633.6,298.69H660.6M762.2,298.69H791.6M890.5,298.69H917.7M0.0,304.05H19.0M19.0,304.05H23.9M121.6,304.05H154.9M255.4,304.05H282.0M380.8,304.05H409.6M506.6,304.05H539.0M642.8,304.05H670.2M773.3,304.05H801.2M904.0,304.05H921.7M921.7,304.05H924.1M16.6,309.41H19.0M19.0,309.41H35.3M129.2,309.41H164.2M261.6,309.41H290.6M390.8,309.41H424.7M519.2,309.41H547.4M650.2,309.41H678.5M775.0,309.41H805.9M914.4,309.41H921.7M921.7,309.41H929.0M17.7,314.77H19.0M19.0,314.77H72.8M137.9,314.77H196.1M271.3,314.77H331.0M396.1,314.77H461.3M526.0,314.77H586.9M656.7,314.77H711.1M778.5,314.77H841.4M921.7,314.77H973.9M19.9,320.13H79.8M143.2,320.13H202.7M279.1,320.13H336.8M410.0,320.13H472.0M530.7,320.13H595.1M666.2,320.13H728.8M802.7,320.13H858.5M921.7,320.13H977.6M33.4,325.49H87.4M157.7,325.49H218.2M282.2,325.49H344.8M421.1,325.49H475.0M540.0,325.49H600.2M680.1,325.49H736.3M806.4,325.49H864.2M937.2,325.49H991.8" stroke="#5c5351" stroke-width="1.65" fill="none"/><path d="M67.0,311.19H71.7M975.3,316.55H976.1M54.2,321.91H54.8M84.8,321.91H87.8M134.9,321.91H135.6M214.2,321.91H217.2M611.3,327.27H614.8M659.3,327.27H663.2" stroke="#5c5351" stroke-width="2.1" fill="none"/><path d="M89.5,311.19H112.1M216.2,311.19H243.5M339.1,311.19H367.9M475.1,311.19H501.4M605.5,311.19H628.6M734.7,311.19H757.6M858.7,311.19H892.2M981.2,311.19H1003.2M91.9,316.55H118.7M223.5,316.55H252.9M356.9,316.55H380.7M486.8,316.55H509.7M616.2,316.55H634.7M743.2,316.55H766.0M869.9,316.55H895.1M992.4,316.55H1003.2M0.0,321.91H7.8M107.6,321.91H134.9M228.9,321.91H260.1M360.0,321.91H387.4M492.6,321.91H515.1M622.9,321.91H652.3M752.5,321.91H777.5M878.0,321.91H904.7M0.0,327.27H12.2M111.4,327.27H142.1M240.4,327.27H265.3M372.3,327.27H398.0M495.0,327.27H523.6M629.1,327.27H658.1M762.3,327.27H786.8M890.1,327.27H914.2" stroke="#8f97c4" stroke-width="2.1" fill="none"/><path d="M0.0,329.03H3.7M19.0,329.03H25.3M542.9,329.03H641.4M670.3,329.03H672.3M844.6,329.03H921.7M19.0,334.39H34.2M163.6,334.39H293.0M463.5,334.39H502.9M549.8,334.39H551.3M681.2,334.39H778.0M808.6,334.39H810.6M810.6,334.39H811.2M850.3,334.39H921.7M931.6,334.39H933.1M933.6,334.39H1003.2M0.0,339.75H19.0M41.1,339.75H43.1M301.9,339.75H431.3M819.5,339.75H820.1M859.4,339.75H921.7M942.5,339.75H1003.2M0.0,345.11H19.0M92.1,345.11H180.4M310.8,345.11H440.2M569.6,345.11H657.2M697.0,345.11H699.0M0.0,350.47H19.0M19.0,350.47H60.9M60.9,350.47H61.6M101.8,350.47H162.5M188.3,350.47H190.3M319.7,350.47H449.1M489.4,350.47H577.3M707.9,350.47H802.3M835.3,350.47H837.3M878.1,350.47H921.7M921.7,350.47H960.3M960.3,350.47H1003.2M0.0,355.83H19.0M112.0,355.83H152.2M197.2,355.83H197.9M328.6,355.83H418.5M456.0,355.83H458.0M587.4,355.83H716.8M716.8,355.83H798.5M844.2,355.83H846.2M886.8,355.83H921.7M0.0,361.19H19.0M19.0,361.19H37.6M76.7,361.19H78.7M78.7,361.19H79.7M117.8,361.19H181.6M206.1,361.19H208.1M208.1,361.19H295.2M335.5,361.19H337.5M337.5,361.19H466.9M466.9,361.19H467.7M507.4,361.19H546.6M594.3,361.19H596.3M725.7,361.19H824.3M853.1,361.19H855.1M897.0,361.19H921.7M921.7,361.19H978.1M0.0,366.55H19.0M87.6,366.55H88.7M126.6,366.55H217.0M217.0,366.55H314.1M344.4,366.55H346.4M346.4,366.55H475.8M516.9,366.55H563.6M603.2,366.55H604.0M864.0,366.55H865.3M904.6,366.55H921.7M987.0,366.55H1003.2M0.0,371.91H19.0M19.0,371.91H96.5M743.5,371.91H872.9M0.0,377.27H19.0M19.0,377.27H57.8M103.3,377.27H105.3M150.5,377.27H234.7M364.1,377.27H444.2M491.5,377.27H493.5M493.5,377.27H494.1M537.7,377.27H596.1M620.9,377.27H622.9M881.7,377.27H882.9M0.0,382.63H19.0M243.6,382.63H293.0M309.6,382.63H373.0M373.0,382.63H423.2M450.0,382.63H455.5M500.4,382.63H502.4M631.8,382.63H683.0M699.5,382.63H714.4M759.2,382.63H761.2M890.6,382.63H891.5M931.9,382.63H934.9M956.4,382.63H967.2M0.1,387.99H19.0M123.1,387.99H123.9M173.0,387.99H176.0M199.9,387.99H222.0M250.5,387.99H252.5M252.5,387.99H304.0M336.2,387.99H381.9M561.2,387.99H564.2M593.3,387.99H600.2M638.7,387.99H640.0M770.1,387.99H820.6M849.5,387.99H870.7M897.5,387.99H899.5M942.7,387.99H945.7M978.6,387.99H983.5M7.0,393.35H9.0M9.0,393.35H19.0M19.0,393.35H58.4M94.6,393.35H132.0M132.0,393.35H132.5M183.5,393.35H186.5M216.0,393.35H261.4M261.4,393.35H316.8M388.8,393.35H390.8M779.0,393.35H835.9M870.1,393.35H908.4M908.4,393.35H909.8M955.4,393.35H958.4M987.5,393.35H1003.2M15.9,398.71H17.9M17.9,398.71H19.0M19.0,398.71H70.3M112.5,398.71H140.9M194.4,398.71H197.4M268.3,398.71H270.3M270.3,398.71H329.3M366.4,398.71H399.7M399.7,398.71H456.6M527.1,398.71H529.1M583.6,398.71H586.6M630.2,398.71H657.2M658.5,398.71H717.6M785.9,398.71H787.9M787.9,398.71H844.9M887.8,398.71H917.3M19.0,404.07H20.4M20.4,404.07H79.4M122.7,404.07H149.8M149.8,404.07H150.9M205.5,404.07H208.5M248.6,404.07H279.2M408.6,404.07H467.6M536.0,404.07H538.0M592.5,404.07H595.5M665.4,404.07H667.0M667.4,404.07H726.3M772.8,404.07H796.8M974.5,404.07H977.5M9.0,409.43H19.0M19.0,409.43H29.3M213.8,409.43H216.8M286.1,409.43H288.1M546.9,409.43H547.4M600.6,409.43H603.6M674.3,409.43H676.3M676.3,409.43H735.0M776.1,409.43H805.7" stroke="#38221f" stroke-width="2.0" fill="none"/><path d="M3.7,329.03H19.0M121.4,329.03H152.7M379.8,329.03H411.5M517.4,329.03H540.9M641.4,329.03H670.3M761.6,329.03H799.7M393.4,334.39H420.4M502.9,334.39H549.8M778.0,334.39H808.6M921.7,334.39H931.6M19.0,339.75H41.1M128.9,339.75H170.5M528.5,339.75H558.7M647.0,339.75H688.1M774.1,339.75H817.5M19.0,345.11H50.0M533.5,345.11H567.6M657.2,345.11H697.0M919.8,345.11H921.7M921.7,345.11H949.4M162.5,350.47H188.3M280.8,350.47H317.7M680.4,350.47H705.9M802.3,350.47H835.3M35.7,355.83H67.8M152.2,355.83H197.2M289.9,355.83H326.6M418.5,355.83H456.0M560.4,355.83H585.4M798.5,355.83H844.2M37.6,361.19H76.7M181.6,361.19H206.1M295.2,361.19H335.5M546.6,361.19H594.3M824.3,361.19H853.1M59.6,366.55H85.6M314.1,366.55H344.4M563.6,366.55H603.2M695.7,366.55H732.6M822.3,366.55H862.0M197.5,371.91H223.9M313.7,371.91H353.3M451.7,371.91H482.7M57.8,377.27H103.3M336.3,377.27H362.1M444.2,377.27H491.5M596.1,377.27H620.9M959.5,377.27H1002.7M78.1,382.63H112.2M455.5,382.63H500.4M606.5,382.63H629.8M714.4,382.63H759.2M843.5,382.63H888.6M967.2,382.63H1003.2M76.0,387.99H121.1M222.0,387.99H250.5M600.2,387.99H638.7M870.7,387.99H897.5M983.5,387.99H1003.2M0.0,393.35H7.0M351.0,393.35H388.8M485.7,393.35H518.2M624.1,393.35H647.6M746.1,393.35H777.0M0.0,398.71H15.9M244.4,398.71H268.3M503.8,398.71H527.1M762.4,398.71H785.9M0.0,404.07H19.0M507.6,404.07H536.0M641.0,404.07H665.4M262.3,409.43H286.1M515.8,409.43H544.9M640.1,409.43H674.3M921.7,409.43H926.7" stroke="#170d0d" stroke-width="2.0" fill="none"/><path d="M25.3,329.03H26.0M68.2,329.03H121.4M152.7,329.03H154.7M154.7,329.03H284.1M284.1,329.03H379.8M411.5,329.03H413.5M453.4,329.03H517.4M540.9,329.03H542.4M672.3,329.03H761.6M799.7,329.03H801.7M921.7,329.03H924.3M924.7,329.03H1003.2M0.0,334.39H19.0M74.0,334.39H162.7M293.0,334.39H393.4M420.4,334.39H422.4M551.8,334.39H681.2M43.1,339.75H44.0M84.0,339.75H128.9M170.5,339.75H172.5M172.5,339.75H301.9M471.8,339.75H528.5M558.7,339.75H559.7M560.7,339.75H647.0M688.1,339.75H690.1M690.1,339.75H774.1M817.5,339.75H819.5M921.7,339.75H942.1M50.0,345.11H52.0M181.4,345.11H310.8M479.9,345.11H533.5M567.6,345.11H569.1M699.0,345.11H828.4M828.4,345.11H829.0M867.6,345.11H919.8M949.4,345.11H951.1M951.4,345.11H1003.2M190.3,350.47H280.8M317.7,350.47H319.7M578.5,350.47H680.4M705.9,350.47H707.9M19.0,355.83H35.7M67.8,355.83H69.8M199.2,355.83H289.9M326.6,355.83H328.6M458.0,355.83H459.1M498.4,355.83H560.4M585.4,355.83H587.4M921.7,355.83H969.2M969.2,355.83H1003.2M596.3,361.19H725.7M978.1,361.19H1003.2M19.0,366.55H59.6M85.6,366.55H87.6M605.2,366.55H695.7M732.6,366.55H734.6M734.6,366.55H822.3M862.0,366.55H864.0M921.7,366.55H986.1M96.5,371.91H96.8M139.1,371.91H197.5M223.9,371.91H225.9M225.9,371.91H313.7M353.3,371.91H355.3M355.3,371.91H451.7M482.7,371.91H484.7M484.7,371.91H485.6M527.3,371.91H614.1M614.1,371.91H743.5M914.4,371.91H921.7M921.7,371.91H995.9M995.9,371.91H1003.2M234.7,377.27H336.3M362.1,377.27H364.1M622.9,377.27H752.3M752.3,377.27H881.7M921.7,377.27H959.5M1002.7,377.27H1003.2M19.0,382.63H33.8M55.8,382.63H78.1M112.2,382.63H114.2M161.5,382.63H164.5M182.7,382.63H242.7M502.4,382.63H503.1M550.2,382.63H553.2M570.8,382.63H606.5M629.8,382.63H631.8M761.2,382.63H811.9M835.1,382.63H843.5M888.6,382.63H890.6M19.0,387.99H45.2M67.9,387.99H76.0M121.1,387.99H123.1M381.9,387.99H435.7M469.1,387.99H511.3M640.7,387.99H693.7M718.6,387.99H770.1M390.8,393.35H445.9M480.5,393.35H485.7M518.2,393.35H520.2M573.8,393.35H576.8M612.3,393.35H624.1M647.6,393.35H649.1M649.6,393.35H704.1M736.1,393.35H746.1M777.0,393.35H779.0M965.8,398.71H968.8M279.2,404.07H336.2M374.4,404.07H408.6M796.8,404.07H855.7M902.8,404.07H921.7M29.3,409.43H88.0M129.9,409.43H158.7M288.1,409.43H344.3M388.1,409.43H417.5M417.5,409.43H474.3M544.9,409.43H546.9M805.7,409.43H863.6M905.1,409.43H921.7M926.7,409.43H928.7M928.7,409.43H929.6M984.7,409.43H987.7" stroke="#4a3836" stroke-width="2.0" fill="none"/><path d="M0.0,330.98H0.8M15.8,330.98H19.0M19.0,330.98H28.4M28.4,330.98H123.8M138.8,330.98H157.8M159.2,330.98H253.2M287.2,330.98H288.6M327.3,330.98H382.6M397.6,330.98H416.6M416.6,330.98H512.0M527.0,330.98H546.0M546.0,330.98H641.4M656.4,330.98H675.4M716.9,330.98H770.8M785.8,330.98H803.8M804.8,330.98H900.2M915.2,330.98H921.7M921.7,330.98H927.8M927.8,330.98H1003.2M0.0,336.34H9.7M19.0,336.34H37.2M37.3,336.34H132.7M144.2,336.34H166.7M166.7,336.34H262.1M273.6,336.34H296.1M296.1,336.34H296.5M337.8,336.34H391.5M403.0,336.34H425.5M425.5,336.34H520.9M532.4,336.34H554.9M554.9,336.34H650.3M661.8,336.34H684.3M725.3,336.34H779.7M791.2,336.34H813.4M813.7,336.34H909.1M920.6,336.34H921.7M921.7,336.34H936.7M936.7,336.34H1003.2" stroke="#736b72" stroke-width="2.1" fill="none"/><path d="M157.8,330.98H159.2M268.2,330.98H287.2M44.0,341.70H45.7M369.7,341.70H400.4M459.0,341.70H500.7M563.8,341.70H567.3M675.7,341.70H693.2M753.8,341.70H788.6M796.5,341.70H799.1M945.6,341.70H947.4M502.8,347.06H547.5M914.5,347.06H921.7M394.2,352.42H423.8M18.5,357.78H19.0M221.1,357.78H242.5M455.8,357.78H460.9M921.7,357.78H936.6M211.2,363.14H244.0M327.4,363.14H340.6M890.0,363.14H921.7M989.4,363.14H1003.2M90.7,368.50H101.1M185.3,368.50H220.1M250.8,368.50H278.0M478.9,368.50H523.8M604.0,368.50H608.3" stroke="#6b605e" stroke-width="2.1" fill="none"/><path d="M0.0,332.76H19.0M19.0,332.76H29.4M94.0,332.76H153.5M232.5,332.76H283.6M353.7,332.76H412.4M484.3,332.76H540.8M613.9,332.76H672.7M742.7,332.76H803.8M875.2,332.76H921.7M921.7,332.76H926.0M994.3,332.76H1003.2M0.0,338.12H19.0M19.0,338.12H23.6M110.3,338.12H166.0M243.3,338.12H296.8M367.4,338.12H423.0M496.4,338.12H556.2M621.0,338.12H682.1M754.6,338.12H814.2M882.5,338.12H921.7M921.7,338.12H930.6M1002.7,338.12H1003.2" stroke="#27284e" stroke-width="1.66" fill="none"/><path d="M29.4,332.76H31.7M290.5,332.76H293.4M412.4,332.76H419.9M808.1,332.76H815.4M296.8,338.12H298.2M682.1,338.12H687.4M817.0,338.12H819.0M930.6,338.12H937.4M940.0,338.12H941.0M170.3,343.48H175.2M437.7,343.48H444.6M562.8,343.48H567.1M19.0,348.84H52.8M292.4,348.84H316.6M537.7,348.84H570.6M678.2,348.84H695.1M705.4,348.84H706.6M795.8,348.84H834.8M834.8,348.84H851.6M921.7,348.84H957.8M50.8,354.20H67.3M455.5,354.20H457.8M542.7,354.20H584.9M584.9,354.20H586.0M689.0,354.20H714.3M947.8,354.20H953.5M966.7,354.20H967.9M157.7,359.56H196.6M335.0,359.56H364.6M444.0,359.56H464.4M464.4,359.56H492.6M588.6,359.56H593.8M723.2,359.56H752.0M829.1,359.56H852.6M30.7,364.92H75.9M172.7,364.92H205.8M290.0,364.92H328.3M421.9,364.92H470.4M473.3,364.92H477.9M559.8,364.92H602.7M861.5,364.92H867.6M94.0,370.28H126.1M202.0,370.28H223.4M352.8,370.28H373.5M452.8,370.28H482.2M558.8,370.28H605.7M58.5,375.64H102.9M195.7,375.64H228.6M319.0,375.64H352.5M361.7,375.64H378.6M466.5,375.64H491.1M879.3,375.64H895.2M957.9,375.64H1001.1M187.3,381.00H230.5M241.2,381.00H242.2M340.2,381.00H370.6M370.6,381.00H375.1M450.5,381.00H500.0M629.4,381.00H630.6M716.7,381.00H758.8M845.7,381.00H876.8M974.9,381.00H1001.6M200.7,386.36H234.0M250.1,386.36H251.2M347.1,386.36H379.5M463.0,386.36H489.4M508.9,386.36H517.7M615.9,386.36H638.3M713.7,386.36H762.9M850.7,386.36H894.2M739.5,391.72H762.2M776.6,391.72H784.2M885.9,391.72H906.0M906.0,391.72H921.7M138.5,397.08H162.1M236.7,397.08H267.9M267.9,397.08H268.8M361.2,397.08H397.3M620.8,397.08H654.3M656.1,397.08H656.9M759.1,397.08H785.5M864.3,397.08H909.0M995.4,397.08H1003.2M102.2,402.44H134.8M384.1,402.44H405.2M516.0,402.44H533.7M612.1,402.44H654.5M772.2,402.44H793.5M889.8,402.44H916.6M921.7,402.44H932.9M0.0,407.80H10.1M254.5,407.80H255.0M387.5,407.80H413.7M642.8,407.80H670.9M771.2,407.80H803.3M902.8,407.80H921.7" stroke="#170d0d" stroke-width="1.66" fill="none"/><path d="M31.7,332.76H94.0M153.5,332.76H161.1M202.3,332.76H232.5M283.6,332.76H290.1M293.4,332.76H353.7M419.9,332.76H431.0M456.9,332.76H484.3M540.8,332.76H549.3M591.6,332.76H613.9M672.7,332.76H677.3M678.7,332.76H742.7M803.8,332.76H808.1M815.4,332.76H875.2M926.0,332.76H931.1M971.9,332.76H994.3M40.6,338.12H110.3M166.0,338.12H170.0M210.0,338.12H243.3M299.4,338.12H367.4M423.0,338.12H428.8M438.2,338.12H496.4M556.2,338.12H557.4M600.3,338.12H621.0M687.6,338.12H754.6M814.2,338.12H817.0M819.0,338.12H882.5M937.4,338.12H940.0M981.9,338.12H1002.7M39.8,343.48H49.5M49.5,343.48H113.0M175.2,343.48H178.9M220.4,343.48H246.4M301.4,343.48H307.0M308.3,343.48H380.4M432.4,343.48H437.7M444.6,343.48H503.7M609.1,343.48H639.4M686.9,343.48H695.9M696.5,343.48H747.4M823.3,343.48H825.9M825.9,343.48H888.7M943.8,343.48H948.9M948.9,343.48H950.0M990.6,343.48H1003.2M0.0,348.84H19.0M52.8,348.84H58.4M58.4,348.84H187.8M229.9,348.84H292.4M317.2,348.84H446.6M446.6,348.84H537.7M570.6,348.84H576.0M576.0,348.84H577.5M618.2,348.84H654.6M695.1,348.84H705.4M706.6,348.84H795.8M851.6,348.84H921.7M957.8,348.84H958.1M999.9,348.84H1003.2M0.0,354.20H19.0M19.0,354.20H28.9M67.3,354.20H196.7M196.7,354.20H198.1M237.4,354.20H326.1M326.1,354.20H455.5M457.8,354.20H542.7M625.5,354.20H689.0M714.3,354.20H843.7M843.7,354.20H921.7M953.5,354.20H966.7M0.0,359.56H19.0M19.0,359.56H76.2M76.2,359.56H157.7M196.6,359.56H205.6M247.0,359.56H335.0M364.6,359.56H444.0M492.6,359.56H562.3M633.5,359.56H722.1M752.0,359.56H829.1M852.6,359.56H921.7M921.7,359.56H975.6M0.0,364.92H19.0M19.0,364.92H30.7M75.9,364.92H85.1M85.1,364.92H123.5M139.5,364.92H172.7M205.8,364.92H214.5M255.6,364.92H290.0M343.9,364.92H421.9M470.4,364.92H473.3M477.9,364.92H559.8M602.7,364.92H603.9M644.6,364.92H732.1M732.1,364.92H861.5M867.6,364.92H921.7M921.7,364.92H952.4M974.8,364.92H984.5M0.0,370.28H19.0M19.0,370.28H90.3M126.1,370.28H202.0M223.4,370.28H224.4M264.7,370.28H352.8M373.5,370.28H452.8M482.2,370.28H558.8M605.7,370.28H611.6M653.3,370.28H740.9M741.0,370.28H870.4M870.4,370.28H921.7M921.7,370.28H993.4M0.0,375.64H19.0M19.0,375.64H58.5M102.9,375.64H195.7M228.6,375.64H232.3M232.3,375.64H233.1M275.7,375.64H319.0M352.5,375.64H361.7M403.6,375.64H466.5M491.1,375.64H620.5M620.5,375.64H620.8M661.6,375.64H693.9M716.4,375.64H749.9M749.9,375.64H879.3M895.2,375.64H921.7M921.7,375.64H957.9M1001.1,375.64H1002.3M1002.3,375.64H1003.2M0.0,381.00H19.0M19.0,381.00H111.8M111.8,381.00H187.3M230.5,381.00H241.2M287.7,381.00H340.2M375.1,381.00H450.5M500.0,381.00H629.4M678.5,381.00H716.7M758.8,381.00H845.7M876.8,381.00H888.2M888.2,381.00H921.7M921.7,381.00H974.9M1001.6,381.00H1003.2M0.0,386.36H19.0M19.0,386.36H120.7M120.7,386.36H200.7M234.0,386.36H250.1M300.5,386.36H347.1M379.5,386.36H463.0M489.4,386.36H508.9M517.7,386.36H615.9M685.0,386.36H713.7M762.9,386.36H766.7M767.7,386.36H850.7M894.2,386.36H897.1M897.1,386.36H921.7M921.7,386.36H1003.2M0.0,391.72H6.6M6.6,391.72H19.0M19.0,391.72H129.6M129.6,391.72H259.0M311.3,391.72H387.2M388.4,391.72H517.8M517.8,391.72H647.2M647.2,391.72H647.9M697.5,391.72H739.5M775.7,391.72H776.6M784.2,391.72H885.9M921.7,391.72H1003.2M0.0,397.08H14.3M15.5,397.08H19.0M19.0,397.08H138.5M162.1,397.08H236.7M321.5,397.08H361.2M397.3,397.08H413.9M434.1,397.08H526.7M526.7,397.08H620.8M654.3,397.08H656.1M710.7,397.08H759.1M785.5,397.08H864.3M909.0,397.08H914.9M914.9,397.08H921.7M921.7,397.08H995.4M0.0,402.44H19.0M49.8,402.44H102.2M153.7,402.44H261.4M331.8,402.44H384.1M406.2,402.44H492.4M533.7,402.44H535.6M535.6,402.44H612.1M654.5,402.44H665.0M719.2,402.44H772.2M818.9,402.44H889.8M932.9,402.44H1003.2M19.0,407.80H26.9M26.9,407.80H49.1M85.2,407.80H156.3M157.6,407.80H254.5M342.6,407.80H387.5M415.1,407.80H544.5M544.5,407.80H642.8M670.9,407.80H673.9M727.1,407.80H737.3M768.0,407.80H771.2M803.3,407.80H902.8M921.7,407.80H926.3M926.3,407.80H1003.2" stroke="#38221f" stroke-width="1.66" fill="none"/><path d="M161.1,332.76H202.3M290.1,332.76H290.5M549.3,332.76H591.6M677.3,332.76H678.7M931.1,332.76H971.9M170.0,338.12H210.0M298.2,338.12H299.4M558.2,338.12H600.3M941.0,338.12H981.9M178.9,343.48H220.4M307.0,343.48H308.3M567.1,343.48H609.1M695.9,343.48H696.5M950.0,343.48H990.6M187.8,348.84H229.9M316.6,348.84H317.2M577.5,348.84H618.2M958.1,348.84H999.9M198.1,354.20H237.4M586.0,354.20H625.5M967.9,354.20H1003.2M205.7,359.56H247.0M593.8,359.56H633.5M722.1,359.56H723.2M975.6,359.56H1003.2M214.5,364.92H255.6M603.9,364.92H644.6M984.5,364.92H1003.2M224.4,370.28H264.7M611.6,370.28H653.3M993.6,370.28H1003.2M233.1,375.64H275.7M620.8,375.64H661.6M242.2,381.00H287.7M630.6,381.00H674.4M251.2,386.36H300.5M638.3,386.36H685.0M766.7,386.36H767.7M259.0,391.72H311.3M387.2,391.72H388.4M647.9,391.72H697.5M14.3,397.08H15.5M268.8,397.08H321.5M656.9,397.08H710.7M19.0,402.44H49.8M134.8,402.44H147.4M147.4,402.44H153.7M261.4,402.44H276.8M276.8,402.44H331.8M405.2,402.44H406.2M492.4,402.44H516.0M665.0,402.44H719.2M793.5,402.44H794.4M794.4,402.44H818.9M916.6,402.44H921.7M49.1,407.80H85.2M156.3,407.80H157.6M255.0,407.80H285.7M285.7,407.80H342.6M413.7,407.80H415.1M674.0,407.80H727.1M737.3,407.80H768.0" stroke="#ffffff" stroke-width="1.66" fill="none"/><path d="M431.0,332.76H456.9M23.6,338.12H40.6M428.8,338.12H438.2M557.4,338.12H558.2M747.4,343.48H774.5M654.6,348.84H678.2M28.9,354.20H50.8M921.7,354.20H947.8M562.3,359.56H588.6M123.5,364.92H139.5M328.3,364.92H343.8M952.4,364.92H974.8M90.3,370.28H94.0M378.6,375.64H403.6M693.9,375.64H716.4M674.4,381.00H678.5M762.2,391.72H775.7M413.9,397.08H434.1M10.1,407.80H19.0" stroke="#6b3f22" stroke-width="1.66" fill="none"/><path d="M0.0,343.48H19.0M19.0,343.48H39.8M113.0,343.48H170.3M246.4,343.48H301.4M380.4,343.48H432.4M503.7,343.48H562.8M639.4,343.48H686.9M774.5,343.48H823.3M888.7,343.48H921.7M921.7,343.48H943.8" stroke="#26223a" stroke-width="1.66" fill="none"/><path d="M229.0,373.86H358.4M921.7,373.86H999.0M22.2,379.22H107.2M237.9,379.22H367.3M367.3,379.22H368.7M410.9,379.22H496.7M34.8,384.58H82.7M87.6,384.58H116.5M424.1,384.58H471.1M475.8,384.58H504.9M635.0,384.58H727.0M734.6,384.58H764.4" stroke="#5f5c63" stroke-width="2.1" fill="none"/><path d="M33.8,382.63H55.8M164.5,382.63H182.7M293.0,382.63H309.6M423.2,382.63H450.0M553.2,382.63H570.8M683.0,382.63H699.5M811.9,382.63H835.1M934.9,382.63H956.4M45.2,387.99H67.9M176.0,387.99H199.9M304.0,387.99H336.2M435.7,387.99H469.1M564.2,387.99H593.3M693.7,387.99H718.6M820.6,387.99H849.5M945.7,387.99H978.6M58.4,393.35H94.6M186.5,393.35H216.0M316.8,393.35H351.0M445.9,393.35H480.5M576.8,393.35H612.3M704.1,393.35H736.1M835.9,393.35H870.1M958.4,393.35H987.5M70.3,398.71H112.5M197.4,398.71H244.4M329.3,398.71H366.4M456.6,398.71H503.8M586.6,398.71H630.2M717.6,398.71H762.4M844.9,398.71H887.8M968.8,398.71H1003.2M79.4,404.07H122.7M208.5,404.07H248.6M336.2,404.07H374.4M467.6,404.07H507.6M595.5,404.07H641.0M726.3,404.07H772.8M855.7,404.07H902.8M977.5,404.07H1003.2M0.0,409.43H9.0M88.0,409.43H129.9M216.8,409.43H262.3M344.3,409.43H388.1M474.3,409.43H515.8M603.6,409.43H640.1M735.0,409.43H776.1M863.6,409.43H905.1M987.7,409.43H1003.2" stroke="#8a4c28" stroke-width="2.0" fill="none"/><path d="M216.6,384.58H237.4M829.4,384.58H860.8M931.2,384.58H948.6M48.5,389.94H65.1M332.4,389.94H353.4M835.7,389.94H859.3M996.0,389.94H1003.2M64.7,395.30H89.5M462.8,395.30H480.0M611.7,395.30H632.2M707.3,395.30H726.0M353.2,400.66H373.1M614.1,400.66H646.8M728.6,400.66H752.1M993.2,400.66H1003.2M103.6,406.02H123.3M209.3,406.02H230.5M337.0,406.02H362.7M622.7,406.02H651.1M721.2,406.02H742.3M856.0,406.02H862.4" stroke="#2c3140" stroke-width="2.1" fill="none"/><path d="M0.0,389.94H3.3M46.0,389.94H48.5M65.1,389.94H89.4M98.4,389.94H126.3M126.3,389.94H220.3M227.8,389.94H255.7M255.7,389.94H332.4M357.2,389.94H385.1M436.5,389.94H478.4M486.6,389.94H513.6M514.5,389.94H608.2M616.0,389.94H643.9M643.9,389.94H737.8M745.4,389.94H773.3M773.3,389.94H774.0M824.6,389.94H835.7M859.3,389.94H867.8M874.8,389.94H902.7M902.7,389.94H921.7M921.7,389.94H991.6M0.0,395.30H12.2M59.8,395.30H64.7M89.5,395.30H97.2M109.1,395.30H135.2M135.2,395.30H230.0M238.5,395.30H264.6M264.6,395.30H359.6M367.9,395.30H394.0M394.0,395.30H395.3M447.4,395.30H462.8M480.0,395.30H486.4M497.3,395.30H523.4M523.4,395.30H611.7M632.2,395.30H652.8M652.8,395.30H707.3M726.0,395.30H746.5M756.1,395.30H782.2M836.4,395.30H875.6M885.5,395.30H910.8M911.6,395.30H921.7M921.7,395.30H1000.6M0.0,400.66H19.0M70.8,400.66H109.6M119.9,400.66H144.1M144.1,400.66H238.3M249.3,400.66H273.5M273.5,400.66H353.2M378.7,400.66H402.9M402.9,400.66H403.2M457.6,400.66H496.7M508.1,400.66H532.3M532.3,400.66H614.1M646.8,400.66H661.7M661.7,400.66H728.6M752.1,400.66H754.4M766.9,400.66H791.1M791.1,400.66H791.9M847.3,400.66H885.0M896.3,400.66H920.5M920.5,400.66H921.7M921.7,400.66H993.2M7.0,406.02H19.0M19.0,406.02H23.6M23.6,406.02H23.9M78.2,406.02H103.6M130.0,406.02H153.0M153.0,406.02H209.3M230.5,406.02H248.2M259.4,406.02H282.4M282.4,406.02H337.0M362.7,406.02H377.6M388.8,406.02H411.8M466.1,406.02H505.9M518.2,406.02H539.9M541.2,406.02H622.7M651.1,406.02H670.6M670.6,406.02H721.2M742.3,406.02H762.4M777.0,406.02H800.0M862.4,406.02H892.1M906.4,406.02H921.7M923.0,406.02H1003.2" stroke="#4b5565" stroke-width="2.1" fill="none"/><path d="M0.0,410.76H3.4M15.9,410.76H19.0M19.0,410.76H32.5M85.8,410.76H123.6M151.2,410.76H161.1M161.9,410.76H256.6M268.3,410.76H291.3M291.3,410.76H376.3M397.7,410.76H420.7M476.6,410.76H512.8M533.8,410.76H549.1M550.1,410.76H594.7M626.7,410.76H644.5M656.5,410.76H679.5M679.5,410.76H774.8M785.9,410.76H808.9M808.9,410.76H809.9M864.9,410.76H893.3M921.3,410.76H921.7M921.7,410.76H931.8M931.9,410.76H1003.2" stroke="#4b5565" stroke-width="0.87" fill="none"/><path d="M3.4,410.76H15.9M32.5,410.76H85.8M161.1,410.76H161.9M256.6,410.76H268.3M391.5,410.76H397.7M420.7,410.76H476.6M512.8,410.76H518.1M549.1,410.76H550.1M644.5,410.76H656.5M774.8,410.76H785.9M809.9,410.76H864.9" stroke="#ffffff" stroke-width="0.87" fill="none"/><path d="M123.6,410.76H151.2M376.3,410.76H391.5M518.1,410.76H533.8M594.7,410.76H626.7M893.3,410.76H921.3" stroke="#2c3140" stroke-width="0.87" fill="none"/></svg><!--/GLITCH--></div>
<!-- scroll column -->
<div class="abs" id="scrollcol" style="left:1026px;top:137px;width:28px;height:766px;background:#3d3d3d"><svg class="abs" style="left:0;top:0" width="28" height="766"><path d="M14.4,8.7L19.7,18.9H9.1Z" fill="#8a8a8a"/><rect x="9" y="384.2" width="10.4" height="302" rx="5.2" fill="#808080"/></svg></div>
<div class="abs" id="rulerEdge" style="left:1025.2px;top:137px;width:1px;height:31px;background:#353535"></div>
<!-- divider -->
<div class="abs" style="left:1054px;top:94px;width:8px;height:809px;background:#363636"></div>

<!-- ===== right panel ===== -->
<div class="abs" id="rpanel" style="left:1062px;top:94px;width:438px;height:809px;background:#363636"></div>


<!-- tab bar 1 -->
<div class="abs" style="left:1062px;top:94px;width:438px;height:47px;background:#272727"></div>
<div class="abs" style="left:1190px;top:98px;width:69.5px;height:44px;background:#363636"></div>
<svg class="abs" style="left:1072px;top:111px" width="10" height="14"><path d="M1.8,1V13M7.2,1V13" stroke="#8e8e8e" stroke-width="1.4"/></svg>
<div class="t" id="tHist" style="left:1098.5px;top:109.9px;font-size:17.5px;color:#bdbdbd;letter-spacing:0.4px">Histogram</div>
<div class="t" id="tCol" style="left:1198px;top:109.9px;font-size:17.5px;color:#ececec;letter-spacing:0.35px">Colour</div>

<!-- COLOUR PANEL BODY placeholder -->

<svg class="abs" style="left:1062px;top:141px" width="438" height="362" viewBox="1062 141 438 362">
<defs>
<symbol id="trk" viewBox="0 0 338.5 14.6"><rect width="338.5" height="14.6" fill="#fff"/><rect x="-2.0" y="5.8" width="6.9" height="7" fill="#ebebeb"/><rect x="4.9" y="1.2" width="6.9" height="4.6" fill="#e6e6e6"/><rect x="11.8" y="5.8" width="6.9" height="7" fill="#ebebeb"/><rect x="18.7" y="1.2" width="6.9" height="4.6" fill="#e6e6e6"/><rect x="25.6" y="5.8" width="6.9" height="7" fill="#ebebeb"/><rect x="32.5" y="1.2" width="6.9" height="4.6" fill="#e6e6e6"/><rect x="39.4" y="5.8" width="6.9" height="7" fill="#ebebeb"/><rect x="46.3" y="1.2" width="6.9" height="4.6" fill="#e6e6e6"/><rect x="53.2" y="5.8" width="6.9" height="7" fill="#ebebeb"/><rect x="60.1" y="1.2" width="6.9" height="4.6" fill="#e6e6e6"/><rect x="67.0" y="5.8" width="6.9" height="7" fill="#ebebeb"/><rect x="73.9" y="1.2" width="6.9" height="4.6" fill="#e6e6e6"/><rect x="80.8" y="5.8" width="6.9" height="7" fill="#ebebeb"/><rect x="87.7" y="1.2" width="6.9" height="4.6" fill="#e6e6e6"/><rect x="94.6" y="5.8" width="6.9" height="7" fill="#ebebeb"/><rect x="101.5" y="1.2" width="6.9" height="4.6" fill="#e6e6e6"/><rect x="108.4" y="5.8" width="6.9" height="7" fill="#ebebeb"/><rect x="115.3" y="1.2" width="6.9" height="4.6" fill="#e6e6e6"/><rect x="122.2" y="5.8" width="6.9" height="7" fill="#ebebeb"/><rect x="129.1" y="1.2" width="6.9" height="4.6" fill="#e6e6e6"/><rect x="136.0" y="5.8" width="6.9" height="7" fill="#ebebeb"/><rect x="142.9" y="1.2" width="6.9" height="4.6" fill="#e6e6e6"/><rect x="149.8" y="5.8" width="6.9" height="7" fill="#ebebeb"/><rect x="156.7" y="1.2" width="6.9" height="4.6" fill="#e6e6e6"/><rect x="163.6" y="5.8" width="6.9" height="7" fill="#ebebeb"/><rect x="170.5" y="1.2" width="6.9" height="4.6" fill="#e6e6e6"/><rect x="177.4" y="5.8" width="6.9" height="7" fill="#ebebeb"/><rect x="184.3" y="1.2" width="6.9" height="4.6" fill="#e6e6e6"/><rect x="191.2" y="5.8" width="6.9" height="7" fill="#ebebeb"/><rect x="198.1" y="1.2" width="6.9" height="4.6" fill="#e6e6e6"/><rect x="205.0" y="5.8" width="6.9" height="7" fill="#ebebeb"/><rect x="211.9" y="1.2" width="6.9" height="4.6" fill="#e6e6e6"/><rect x="218.8" y="5.8" width="6.9" height="7" fill="#ebebeb"/><rect x="225.7" y="1.2" width="6.9" height="4.6" fill="#e6e6e6"/><rect x="232.6" y="5.8" width="6.9" height="7" fill="#ebebeb"/><rect x="239.5" y="1.2" width="6.9" height="4.6" fill="#e6e6e6"/><rect x="246.4" y="5.8" width="6.9" height="7" fill="#ebebeb"/><rect x="253.3" y="1.2" width="6.9" height="4.6" fill="#e6e6e6"/><rect x="260.2" y="5.8" width="6.9" height="7" fill="#ebebeb"/><rect x="267.1" y="1.2" width="6.9" height="4.6" fill="#e6e6e6"/><rect x="274.0" y="5.8" width="6.9" height="7" fill="#ebebeb"/><rect x="280.9" y="1.2" width="6.9" height="4.6" fill="#e6e6e6"/><rect x="287.8" y="5.8" width="6.9" height="7" fill="#ebebeb"/><rect x="294.7" y="1.2" width="6.9" height="4.6" fill="#e6e6e6"/><rect x="301.6" y="5.8" width="6.9" height="7" fill="#ebebeb"/><rect x="308.5" y="1.2" width="6.9" height="4.6" fill="#e6e6e6"/><rect x="315.4" y="5.8" width="6.9" height="7" fill="#ebebeb"/><rect x="322.3" y="1.2" width="6.9" height="4.6" fill="#e6e6e6"/><rect x="329.2" y="5.8" width="6.9" height="7" fill="#ebebeb"/><rect x="336.1" y="1.2" width="6.9" height="4.6" fill="#e6e6e6"/><rect x="11.5" y="0" width="1.6" height="1.1" fill="#e8503a"/><rect x="30.1" y="0" width="1.6" height="1.1" fill="#e8503a"/><rect x="48.7" y="0" width="1.6" height="1.1" fill="#e8503a"/><rect x="67.3" y="0" width="1.6" height="1.1" fill="#e8503a"/><rect x="85.9" y="0" width="1.6" height="1.1" fill="#e8503a"/><rect x="104.5" y="0" width="1.6" height="1.1" fill="#e8503a"/><rect x="123.1" y="0" width="1.6" height="1.1" fill="#e8503a"/><rect x="141.7" y="0" width="1.6" height="1.1" fill="#e8503a"/><rect x="160.3" y="0" width="1.6" height="1.1" fill="#e8503a"/><rect x="178.9" y="0" width="1.6" height="1.1" fill="#e8503a"/><rect x="197.5" y="0" width="1.6" height="1.1" fill="#e8503a"/><rect x="216.1" y="0" width="1.6" height="1.1" fill="#e8503a"/><rect x="234.7" y="0" width="1.6" height="1.1" fill="#e8503a"/><rect x="253.3" y="0" width="1.6" height="1.1" fill="#e8503a"/><rect x="271.9" y="0" width="1.6" height="1.1" fill="#e8503a"/><rect x="290.5" y="0" width="1.6" height="1.1" fill="#e8503a"/><rect x="309.1" y="0" width="1.6" height="1.1" fill="#e8503a"/><rect x="327.7" y="0" width="1.6" height="1.1" fill="#e8503a"/><rect x="3.0" y="6.1" width="69.9" height="0.9" rx="0.45" fill="#b5683f"/><rect x="88.6" y="6.1" width="98.1" height="0.9" rx="0.45" fill="#b5683f"/><rect x="199.4" y="6.1" width="73.0" height="0.9" rx="0.45" fill="#b5683f"/><rect x="289.4" y="6.1" width="108.5" height="0.9" rx="0.45" fill="#b5683f"/><rect x="25.0" y="7.0" width="32.6" height="1.2" rx="0.6" fill="#1c100c"/><rect x="90.9" y="7.0" width="20.1" height="1.2" rx="0.6" fill="#1c100c"/><rect x="149.0" y="7.0" width="34.6" height="1.2" rx="0.6" fill="#1c100c"/><rect x="211.0" y="7.0" width="39.8" height="1.2" rx="0.6" fill="#1c100c"/><rect x="284.0" y="7.0" width="25.8" height="1.2" rx="0.6" fill="#1c100c"/><rect x="336.3" y="7.0" width="44.9" height="1.2" rx="0.6" fill="#1c100c"/><rect x="0.0" y="8.2" width="65.0" height="1.3" rx="0.65" fill="#ffffff"/><rect x="95.4" y="8.2" width="31.4" height="1.3" rx="0.65" fill="#ffffff"/><rect x="150.0" y="8.2" width="49.9" height="1.3" rx="0.65" fill="#ffffff"/><rect x="217.8" y="8.2" width="68.1" height="1.3" rx="0.65" fill="#ffffff"/><rect x="310.1" y="8.2" width="36.2" height="1.3" rx="0.65" fill="#ffffff"/><rect x="10.0" y="9.0" width="35.0" height="0.9" rx="0.45" fill="#c98a66"/><rect x="78.6" y="9.0" width="48.1" height="0.9" rx="0.45" fill="#c98a66"/><rect x="152.7" y="9.0" width="43.7" height="0.9" rx="0.45" fill="#c98a66"/><rect x="221.1" y="9.0" width="37.5" height="0.9" rx="0.45" fill="#c98a66"/><rect x="274.3" y="9.0" width="64.6" height="0.9" rx="0.45" fill="#c98a66"/><rect x="40.0" y="9.9" width="48.4" height="1.2" rx="0.6" fill="#3a1d12"/><rect x="119.7" y="9.9" width="54.1" height="1.2" rx="0.6" fill="#3a1d12"/><rect x="225.5" y="9.9" width="47.6" height="1.2" rx="0.6" fill="#3a1d12"/><rect x="321.1" y="9.9" width="42.4" height="1.2" rx="0.6" fill="#3a1d12"/><rect x="15.0" y="11.0" width="29.3" height="1.2" rx="0.6" fill="#ffffff"/><rect x="78.6" y="11.0" width="53.9" height="1.2" rx="0.6" fill="#ffffff"/><rect x="158.6" y="11.0" width="57.3" height="1.2" rx="0.6" fill="#ffffff"/><rect x="262.5" y="11.0" width="39.3" height="1.2" rx="0.6" fill="#ffffff"/><rect x="332.8" y="11.0" width="40.8" height="1.2" rx="0.6" fill="#ffffff"/><rect x="30.0" y="11.6" width="79.8" height="0.9" rx="0.45" fill="#b5683f"/><rect x="132.5" y="11.6" width="41.1" height="0.9" rx="0.45" fill="#b5683f"/><rect x="190.5" y="11.6" width="68.7" height="0.9" rx="0.45" fill="#b5683f"/><rect x="294.0" y="11.6" width="59.8" height="0.9" rx="0.45" fill="#b5683f"/><rect x="5.0" y="12.6" width="33.8" height="1.0" rx="0.5" fill="#2a1610"/><rect x="99.9" y="12.6" width="25.6" height="1.0" rx="0.5" fill="#2a1610"/><rect x="181.8" y="12.6" width="33.9" height="1.0" rx="0.5" fill="#2a1610"/><rect x="272.5" y="12.6" width="24.5" height="1.0" rx="0.5" fill="#2a1610"/><rect x="338.0" y="12.6" width="28.7" height="1.0" rx="0.5" fill="#2a1610"/><rect x="50.0" y="13.5" width="43.9" height="0.8" rx="0.4" fill="#c07a55"/><rect x="125.8" y="13.5" width="42.3" height="0.8" rx="0.4" fill="#c07a55"/><rect x="190.1" y="13.5" width="32.6" height="0.8" rx="0.4" fill="#c07a55"/><rect x="259.0" y="13.5" width="61.1" height="0.8" rx="0.4" fill="#c07a55"/></symbol>
<clipPath id="pill"><rect x="0" y="0" width="338.5" height="14.6" rx="7.3"/></clipPath>
<clipPath id="cS1"><circle cx="1105.3" cy="186.7" r="18"/></clipPath>
<clipPath id="cS2"><circle cx="1124" cy="205.3" r="18"/></clipPath>
<clipPath id="cS3"><circle cx="1095.7" cy="215" r="8.7"/></clipPath>
<clipPath id="cHalf"><rect x="1185" y="160" width="34" height="22.3"/></clipPath>
<clipPath id="cHalf2"><rect x="1086" y="460" width="34" height="19"/></clipPath>
<pattern id="reddots" x="1191" y="168" width="5.4" height="2.6" patternUnits="userSpaceOnUse"><rect width="5.4" height="2.6" fill="#fff"/><rect x="1.6" y="0.7" width="1.8" height="1.1" fill="#ee6a5c"/></pattern>
<linearGradient id="tube" x1="0" y1="0" x2="1" y2="1"><stop offset="0" stop-color="#d8d8d8"/><stop offset="1" stop-color="#a0a0a0"/></linearGradient>
</defs>
<!-- swatches -->
<circle cx="1105.3" cy="186.7" r="19.5" fill="#fff" stroke="#474747" stroke-width="3"/>
<g clip-path="url(#cS1)"><path d="M1090,202L1121,171" stroke="#e8432f" stroke-width="2.6"/></g>
<circle cx="1095.7" cy="215" r="8.7" fill="#e4e4e4"/>
<g clip-path="url(#cS3)"><path d="M1087,223.7L1104.4,206.3" stroke="#e3283f" stroke-width="2"/></g>
<circle cx="1124" cy="205.3" r="19.5" fill="#fff" stroke="#474747" stroke-width="3"/>
<g clip-path="url(#cS2)"><path d="M1108.7,220.6L1139.7,189.6" stroke="#e8432f" stroke-width="2.6"/></g>
<!-- swap arrow -->
<path d="M1126.5,169.8Q1137.5,172.5 1140.8,183" fill="none" stroke="#8f8f8f" stroke-width="1.7"/>
<path d="M1130.8,166.2L1125.6,169.6L1129.6,174.2" fill="none" stroke="#8f8f8f" stroke-width="1.7"/>
<path d="M1136.6,180.6L1141,184.6L1144,179.6" fill="none" stroke="#8f8f8f" stroke-width="1.7"/>
<!-- eyedropper -->
<path d="M1161.6,190.8L1174.2,178" stroke="url(#tube)" stroke-width="4.4" stroke-linecap="round" fill="none"/>
<g transform="translate(1181.2,171) rotate(45)"><ellipse cx="0" cy="-0.5" rx="5.8" ry="7" fill="#b97b5c"/><rect x="-4.6" y="4.2" width="9.2" height="3.6" rx="1.2" fill="#b97b5c"/></g>
<!-- half circle -->
<circle cx="1201.8" cy="179.1" r="12" fill="none" stroke="#4a4a4a" stroke-width="1.7"/>
<g clip-path="url(#cHalf)"><circle cx="1201.8" cy="179.1" r="10.6" fill="url(#reddots)"/></g>
<!-- lock + CMYK -->
<rect x="1361.2" y="203" width="27.2" height="27.8" fill="#2a2a2a"/>
<path d="M1372.4,217V214.3A3.55,3.55 0 0 1 1379.5,214.3V217" fill="none" stroke="#a8a8a8" stroke-width="1.5"/>
<rect x="1370.9" y="216.3" width="10.2" height="9.4" rx="1.2" fill="#a8a8a8"/>
<rect x="1396.7" y="204.7" width="110" height="23.4" rx="2" fill="#444"/>
<!-- sliders -->
<g transform="translate(1110.4,245.4)" clip-path="url(#pill)"><use href="#trk" width="338.5" height="14.6"/></g>
<circle cx="1350.5" cy="252.6" r="8.9" fill="none" stroke="rgba(60,60,60,0.55)" stroke-width="0.8"/><circle cx="1350.5" cy="252.6" r="7.6" fill="none" stroke="#f0f0f0" stroke-width="2.5"/><circle cx="1350.5" cy="252.6" r="6.2" fill="none" stroke="rgba(50,40,35,0.7)" stroke-width="0.8"/>
<g transform="translate(1110.4,282.1)" clip-path="url(#pill)"><use href="#trk" width="338.5" height="14.6"/></g>
<circle cx="1336.3" cy="289.3" r="8.9" fill="none" stroke="rgba(60,60,60,0.55)" stroke-width="0.8"/><circle cx="1336.3" cy="289.3" r="7.6" fill="none" stroke="#f0f0f0" stroke-width="2.5"/><circle cx="1336.3" cy="289.3" r="6.2" fill="none" stroke="rgba(50,40,35,0.7)" stroke-width="0.8"/>
<g transform="translate(1110.4,319.0)" clip-path="url(#pill)"><use href="#trk" width="338.5" height="14.6"/></g>
<circle cx="1333.7" cy="326.2" r="8.9" fill="none" stroke="rgba(60,60,60,0.55)" stroke-width="0.8"/><circle cx="1333.7" cy="326.2" r="7.6" fill="none" stroke="#f0f0f0" stroke-width="2.5"/><circle cx="1333.7" cy="326.2" r="6.2" fill="none" stroke="rgba(50,40,35,0.7)" stroke-width="0.8"/>
<g transform="translate(1110.4,355.7)" clip-path="url(#pill)"><use href="#trk" width="338.5" height="14.6"/></g>
<circle cx="1402" cy="362.9" r="8.9" fill="none" stroke="rgba(60,60,60,0.55)" stroke-width="0.8"/><circle cx="1402" cy="362.9" r="7.6" fill="none" stroke="#f0f0f0" stroke-width="2.5"/><circle cx="1402" cy="362.9" r="6.2" fill="none" stroke="rgba(50,40,35,0.7)" stroke-width="0.8"/>
<rect x="1456.8" y="237.5" width="60" height="30" rx="4" fill="#252525"/>
<rect x="1456.8" y="274.3" width="60" height="30" rx="4" fill="#252525"/>
<rect x="1456.8" y="311.2" width="60" height="30" rx="4" fill="#252525"/>
<rect x="1456.8" y="348" width="60" height="30" rx="4" fill="#252525"/>

<!-- spectrum -->
<rect x="1084.8" y="391.3" width="420" height="41.7" fill="#222"/>
<!-- opacity -->
<circle cx="1103.1" cy="475.9" r="12" fill="none" stroke="#4a4a4a" stroke-width="1.5"/>
<g clip-path="url(#cHalf2)"><circle cx="1103.1" cy="475.9" r="9.8" fill="url(#reddots)"/></g>
<rect x="1421.6" y="460.8" width="66" height="27.2" rx="2.5" fill="#202020"/>
<rect x="1487.2" y="460.8" width="14" height="27.2" fill="#444"/>
<path d="M1494.4,471L1500.6,477.3" fill="none" stroke="#e6e6e6" stroke-width="1.6"/>
</svg>
<div class="abs" style="left:1085.8px;top:392.3px;width:414.2px;height:39.7px;background:linear-gradient(to bottom,#fff 0%,rgba(255,255,255,0.75) 18%,rgba(255,255,255,0) 56%,rgba(0,0,0,0) 48%,rgba(0,0,0,0.8) 86%,#000 100%),linear-gradient(to right,hsl(4,85%,50%) 0px,hsl(28,95%,52%) 25px,hsl(55,95%,58%) 68px,hsl(72,65%,50%) 110px,hsl(95,50%,45%) 160px,hsl(140,42%,42%) 200px,hsl(198,80%,62%) 232px,hsl(228,65%,38%) 275px,hsl(250,60%,32%) 315px,hsl(282,50%,42%) 360px,hsl(322,75%,50%) 400px,hsl(338,85%,50%) 420px)"></div>
<svg class="abs" style="left:1123px;top:470.0px" width="289" height="15.3"><defs><pattern id="ck2" x="3.4" y="1.4" width="14" height="14" patternUnits="userSpaceOnUse"><rect width="14" height="14" fill="#fff"/><rect x="7" width="7" height="7" fill="#e6e6e6"/><rect y="7" width="7" height="7" fill="#e6e6e6"/></pattern><clipPath id="pill2"><rect width="289" height="15.3" rx="7.65"/></clipPath></defs><g clip-path="url(#pill2)"><rect width="289" height="15.3" fill="url(#ck2)"/><path d="M12,0.6H289" stroke="#e8503a" stroke-width="1.2" stroke-dasharray="1.6 7.7"/></g></svg>
<svg class="abs" style="left:1120px;top:465px" width="24" height="24"><circle cx="12.3" cy="11.9" r="8.9" fill="none" stroke="rgba(70,70,70,0.6)" stroke-width="0.8"/><circle cx="12.3" cy="11.9" r="7.4" fill="rgba(255,255,255,0.35)" stroke="#f2f2f2" stroke-width="2.4"/><circle cx="12.3" cy="11.9" r="6.1" fill="none" stroke="#7d7d7d" stroke-width="0.9"/></svg>
<div class="t" id="tCMYK" style="left:1402.5px;top:209.2px;font-size:17.5px;color:#f0f0f0;letter-spacing:-0.4px">CMYK</div>
<div class="t" id="tC" style="left:1063px;width:40px;text-align:right;top:245.5px;font-size:17.5px;color:#b8b8b8;letter-spacing:-1.0px">C:</div>
<div class="t" id="tM" style="left:1063px;width:40px;text-align:right;top:282.3px;font-size:17.5px;color:#b8b8b8;letter-spacing:-1.0px">M:</div>
<div class="t" id="tY" style="left:1063px;width:40px;text-align:right;top:319.1px;font-size:17.5px;color:#b8b8b8;letter-spacing:-1.0px">Y:</div>
<div class="t" id="tK" style="left:1063px;width:40px;text-align:right;top:355.9px;font-size:17.5px;color:#b8b8b8;letter-spacing:-1.0px">K:</div>
<div class="t" id="v72" style="left:1467.5px;top:245.2px;font-size:17.5px;color:#e8e8e8;letter-spacing:-0.9px">72</div>
<div class="t" id="v68" style="left:1467.5px;top:282.0px;font-size:17.5px;color:#e8e8e8;letter-spacing:-0.9px">68</div>
<div class="t" id="v67" style="left:1467.5px;top:318.8px;font-size:17.5px;color:#e8e8e8;letter-spacing:-0.9px">67</div>
<div class="t" id="v88" style="left:1467.5px;top:355.6px;font-size:17.5px;color:#e8e8e8;letter-spacing:-0.9px">88</div>
<div class="t" id="tOpa1" style="left:1085px;top:442.4px;font-size:17.5px;color:#c4c4c4;letter-spacing:-0.65px">Opacity</div>
<div class="t" id="t0pc" style="left:1429px;top:467.5px;font-size:17.5px;color:#f0f0f0;letter-spacing:-0.6px">0 %</div>


<!-- tab bar 2 -->
<div class="abs" style="left:1062px;top:503px;width:438px;height:47px;background:#272727"></div>
<div class="abs" style="left:1090px;top:506.5px;width:66.5px;height:44px;background:#363636"></div>
<svg class="abs" style="left:1072px;top:520px" width="10" height="14"><path d="M1.8,0.5V12.5M7.2,0.5V12.5" stroke="#8e8e8e" stroke-width="1.4"/></svg>
<div class="t" id="tLay" style="left:1098.5px;top:518.4px;font-size:17.5px;color:#ececec;letter-spacing:-0.55px">Layers</div>
<div class="t" id="tAdj" style="left:1164px;top:518.4px;font-size:17.5px;color:#bdbdbd;letter-spacing:0.3px">Adj</div>
<div class="t" id="tFX" style="left:1207.5px;top:518.4px;font-size:17.5px;color:#bdbdbd;letter-spacing:-1.6px">FX</div>
<div class="t" id="tChn" style="left:1242.5px;top:518.4px;font-size:17.5px;color:#bdbdbd;letter-spacing:-0.2px">Chn</div>
<div class="t" id="tBrs" style="left:1290.5px;top:518.4px;font-size:17.5px;color:#bdbdbd;letter-spacing:-1.1px">Brs</div>
<div class="t" id="tStock" style="left:1330.5px;top:518.4px;font-size:17.5px;color:#bdbdbd">Stock</div>

<!-- layers header -->
<div class="t" id="tOpa2" style="left:1074.5px;top:563.4px;font-size:17.5px;color:#c2c2c2;letter-spacing:-0.65px">Opacity:</div>
<div class="abs" style="left:1141px;top:556px;width:84px;height:30.5px;background:#222;border-radius:4px"></div>
<div class="t" id="t100" style="left:1151.5px;top:563.9px;font-size:17.5px;color:#f0f0f0;letter-spacing:-0.55px">100 %</div>
<svg class="abs" style="left:1207px;top:566px" width="14" height="12"><path d="M2,3L7,8.3L12,3" fill="none" stroke="#e8e8e8" stroke-width="1.6"/></svg>
<div class="abs" style="left:1233px;top:558px;width:225px;height:27px;background:#444;border-radius:2px"></div>
<div class="t" id="tNorm" style="left:1239.5px;top:563.9px;font-size:17.5px;color:#f0f0f0;letter-spacing:0.55px">Normal</div>
<svg class="abs" style="left:1440px;top:566px" width="14" height="12"><path d="M2,3L7.2,8.3L12.4,3" fill="none" stroke="#e8e8e8" stroke-width="1.6"/></svg>
<svg class="abs" style="left:1462px;top:556px" width="30" height="30" viewBox="1462 556 30 30"><path d="M1475.18,566.12L1475.62,563.74L1478.58,563.74L1479.02,566.12L1480.26,566.72L1482.41,565.58L1484.25,567.89L1482.66,569.72L1482.97,571.07L1485.19,572.03L1484.54,574.91L1482.11,574.81L1481.25,575.89L1481.89,578.24L1479.23,579.52L1477.79,577.56L1476.41,577.56L1474.97,579.52L1472.31,578.24L1472.95,575.89L1472.09,574.81L1469.66,574.91L1469.01,572.03L1471.23,571.07L1471.54,569.72L1469.95,567.89L1471.79,565.58L1473.94,566.72ZM1479.50,571.70A2.4,2.4 0 1 0 1474.70,571.70A2.4,2.4 0 1 0 1479.50,571.70Z" fill="#a4a4a4" fill-rule="evenodd" stroke="#a4a4a4" stroke-width="0.8" stroke-linejoin="round"/></svg>

<!-- layers list -->
<div class="abs" style="left:1062px;top:590px;width:438px;height:313px;background:#272727"></div>
<div class="abs" style="left:1062px;top:590px;width:438px;height:5px;background:#363636"></div>
<div class="abs" style="left:1062.5px;top:595px;width:440px;height:58.2px;background:#000"></div>
<div class="abs" style="left:1064px;top:596.3px;width:25px;height:55.7px;background:#4e6d93"></div>
<div class="abs" style="left:1090.3px;top:596.3px;width:55.7px;height:55.7px;background:#4e6d93"></div>
<div class="abs" style="left:1147.8px;top:596.3px;width:353px;height:55.7px;background:#4e6d93"></div>
<div class="t" id="tImg" style="left:1152px;top:614.0px;font-size:20.5px;color:#b9c5d8;letter-spacing:-0.65px">Image.png</div>
<div class="abs" style="left:1472.4px;top:618px;width:14px;height:14px;border-radius:50%;background:#a8a8a8"></div>
<svg class="abs" style="left:1062px;top:594px" width="90" height="60" viewBox="1062 594 90 60"><defs><clipPath id="cTh"><rect x="1094.0" y="600.0" width="48.6" height="48.2"/></clipPath></defs><g clip-path="url(#cTh)"><rect x="1094.0" y="600.0" width="48.6" height="48.2" fill="#9c9c9c"/><rect x="1094.00" y="606.00" width="3.45" height="3.45" fill="#7f7f7f"/><rect x="1100.90" y="606.00" width="3.45" height="3.45" fill="#7f7f7f"/><rect x="1107.80" y="606.00" width="3.45" height="3.45" fill="#7f7f7f"/><rect x="1114.70" y="606.00" width="3.45" height="3.45" fill="#7f7f7f"/><rect x="1121.60" y="606.00" width="3.45" height="3.45" fill="#7f7f7f"/><rect x="1128.50" y="606.00" width="3.45" height="3.45" fill="#7f7f7f"/><rect x="1135.40" y="606.00" width="3.45" height="3.45" fill="#7f7f7f"/><rect x="1142.30" y="606.00" width="0.30" height="3.45" fill="#7f7f7f"/><rect x="1097.45" y="609.45" width="3.45" height="3.45" fill="#7f7f7f"/><rect x="1104.35" y="609.45" width="3.45" height="3.45" fill="#7f7f7f"/><rect x="1111.25" y="609.45" width="3.45" height="3.45" fill="#7f7f7f"/><rect x="1118.15" y="609.45" width="3.45" height="3.45" fill="#7f7f7f"/><rect x="1125.05" y="609.45" width="3.45" height="3.45" fill="#7f7f7f"/><rect x="1131.95" y="609.45" width="3.45" height="3.45" fill="#7f7f7f"/><rect x="1138.85" y="609.45" width="3.45" height="3.45" fill="#7f7f7f"/><rect x="1094.00" y="612.90" width="3.45" height="3.45" fill="#7f7f7f"/><rect x="1100.90" y="612.90" width="3.45" height="3.45" fill="#7f7f7f"/><rect x="1107.80" y="612.90" width="3.45" height="3.45" fill="#7f7f7f"/><rect x="1114.70" y="612.90" width="3.45" height="3.45" fill="#7f7f7f"/><rect x="1121.60" y="612.90" width="3.45" height="3.45" fill="#7f7f7f"/><rect x="1128.50" y="612.90" width="3.45" height="3.45" fill="#7f7f7f"/><rect x="1135.40" y="612.90" width="3.45" height="3.45" fill="#7f7f7f"/><rect x="1142.30" y="612.90" width="0.30" height="3.45" fill="#7f7f7f"/><rect x="1097.45" y="616.35" width="3.45" height="3.45" fill="#7f7f7f"/><rect x="1104.35" y="616.35" width="3.45" height="3.45" fill="#7f7f7f"/><rect x="1111.25" y="616.35" width="3.45" height="3.45" fill="#7f7f7f"/><rect x="1118.15" y="616.35" width="3.45" height="3.45" fill="#7f7f7f"/><rect x="1125.05" y="616.35" width="3.45" height="3.45" fill="#7f7f7f"/><rect x="1131.95" y="616.35" width="3.45" height="3.45" fill="#7f7f7f"/><rect x="1138.85" y="616.35" width="3.45" height="3.45" fill="#7f7f7f"/><rect x="1094.00" y="619.80" width="3.45" height="3.45" fill="#7f7f7f"/><rect x="1100.90" y="619.80" width="3.45" height="3.45" fill="#7f7f7f"/><rect x="1107.80" y="619.80" width="3.45" height="3.45" fill="#7f7f7f"/><rect x="1114.70" y="619.80" width="3.45" height="3.45" fill="#7f7f7f"/><rect x="1121.60" y="619.80" width="3.45" height="3.45" fill="#7f7f7f"/><rect x="1128.50" y="619.80" width="3.45" height="3.45" fill="#7f7f7f"/><rect x="1135.40" y="619.80" width="3.45" height="3.45" fill="#7f7f7f"/><rect x="1142.30" y="619.80" width="0.30" height="3.45" fill="#7f7f7f"/><rect x="1097.45" y="623.25" width="3.45" height="3.45" fill="#7f7f7f"/><rect x="1104.35" y="623.25" width="3.45" height="3.45" fill="#7f7f7f"/><rect x="1111.25" y="623.25" width="3.45" height="3.45" fill="#7f7f7f"/><rect x="1118.15" y="623.25" width="3.45" height="3.45" fill="#7f7f7f"/><rect x="1125.05" y="623.25" width="3.45" height="3.45" fill="#7f7f7f"/><rect x="1131.95" y="623.25" width="3.45" height="3.45" fill="#7f7f7f"/><rect x="1138.85" y="623.25" width="3.45" height="3.45" fill="#7f7f7f"/><rect x="1094.00" y="626.70" width="3.45" height="3.45" fill="#7f7f7f"/><rect x="1100.90" y="626.70" width="3.45" height="3.45" fill="#7f7f7f"/><rect x="1107.80" y="626.70" width="3.45" height="3.45" fill="#7f7f7f"/><rect x="1114.70" y="626.70" width="3.45" height="3.45" fill="#7f7f7f"/><rect x="1121.60" y="626.70" width="3.45" height="3.45" fill="#7f7f7f"/><rect x="1128.50" y="626.70" width="3.45" height="3.45" fill="#7f7f7f"/><rect x="1135.40" y="626.70" width="3.45" height="3.45" fill="#7f7f7f"/><rect x="1142.30" y="626.70" width="0.30" height="3.45" fill="#7f7f7f"/><rect x="1097.45" y="630.15" width="3.45" height="3.45" fill="#7f7f7f"/><rect x="1104.35" y="630.15" width="3.45" height="3.45" fill="#7f7f7f"/><rect x="1111.25" y="630.15" width="3.45" height="3.45" fill="#7f7f7f"/><rect x="1118.15" y="630.15" width="3.45" height="3.45" fill="#7f7f7f"/><rect x="1125.05" y="630.15" width="3.45" height="3.45" fill="#7f7f7f"/><rect x="1131.95" y="630.15" width="3.45" height="3.45" fill="#7f7f7f"/><rect x="1138.85" y="630.15" width="3.45" height="3.45" fill="#7f7f7f"/><rect x="1094.00" y="633.60" width="3.45" height="3.45" fill="#7f7f7f"/><rect x="1100.90" y="633.60" width="3.45" height="3.45" fill="#7f7f7f"/><rect x="1107.80" y="633.60" width="3.45" height="3.45" fill="#7f7f7f"/><rect x="1114.70" y="633.60" width="3.45" height="3.45" fill="#7f7f7f"/><rect x="1121.60" y="633.60" width="3.45" height="3.45" fill="#7f7f7f"/><rect x="1128.50" y="633.60" width="3.45" height="3.45" fill="#7f7f7f"/><rect x="1135.40" y="633.60" width="3.45" height="3.45" fill="#7f7f7f"/><rect x="1142.30" y="633.60" width="0.30" height="3.45" fill="#7f7f7f"/><rect x="1097.45" y="637.05" width="3.45" height="3.45" fill="#7f7f7f"/><rect x="1104.35" y="637.05" width="3.45" height="3.45" fill="#7f7f7f"/><rect x="1111.25" y="637.05" width="3.45" height="3.45" fill="#7f7f7f"/><rect x="1118.15" y="637.05" width="3.45" height="3.45" fill="#7f7f7f"/><rect x="1125.05" y="637.05" width="3.45" height="3.45" fill="#7f7f7f"/><rect x="1131.95" y="637.05" width="3.45" height="3.45" fill="#7f7f7f"/><rect x="1138.85" y="637.05" width="3.45" height="3.45" fill="#7f7f7f"/><rect x="1094.00" y="640.50" width="3.45" height="3.45" fill="#7f7f7f"/><rect x="1100.90" y="640.50" width="3.45" height="3.45" fill="#7f7f7f"/><rect x="1107.80" y="640.50" width="3.45" height="3.45" fill="#7f7f7f"/><rect x="1114.70" y="640.50" width="3.45" height="3.45" fill="#7f7f7f"/><rect x="1121.60" y="640.50" width="3.45" height="3.45" fill="#7f7f7f"/><rect x="1128.50" y="640.50" width="3.45" height="3.45" fill="#7f7f7f"/><rect x="1135.40" y="640.50" width="3.45" height="3.45" fill="#7f7f7f"/><rect x="1142.30" y="640.50" width="0.30" height="3.45" fill="#7f7f7f"/><rect x="1097.45" y="643.95" width="3.45" height="3.45" fill="#7f7f7f"/><rect x="1104.35" y="643.95" width="3.45" height="3.45" fill="#7f7f7f"/><rect x="1111.25" y="643.95" width="3.45" height="3.45" fill="#7f7f7f"/><rect x="1118.15" y="643.95" width="3.45" height="3.45" fill="#7f7f7f"/><rect x="1125.05" y="643.95" width="3.45" height="3.45" fill="#7f7f7f"/><rect x="1131.95" y="643.95" width="3.45" height="3.45" fill="#7f7f7f"/><rect x="1138.85" y="643.95" width="3.45" height="3.45" fill="#7f7f7f"/><rect x="1094.00" y="647.40" width="3.45" height="0.80" fill="#7f7f7f"/><rect x="1100.90" y="647.40" width="3.45" height="0.80" fill="#7f7f7f"/><rect x="1107.80" y="647.40" width="3.45" height="0.80" fill="#7f7f7f"/><rect x="1114.70" y="647.40" width="3.45" height="0.80" fill="#7f7f7f"/><rect x="1121.60" y="647.40" width="3.45" height="0.80" fill="#7f7f7f"/><rect x="1128.50" y="647.40" width="3.45" height="0.80" fill="#7f7f7f"/><rect x="1135.40" y="647.40" width="3.45" height="0.80" fill="#7f7f7f"/><rect x="1142.30" y="647.40" width="0.30" height="0.80" fill="#7f7f7f"/><rect x="1094.0" y="600.0" width="48.6" height="6.1" fill="#fff"/><path d="M1088.5,606.1L1094.8,600.0" stroke="#e0543f" stroke-width="1.2"/><path d="M1105.0,606.1L1111.3,600.0" stroke="#e0543f" stroke-width="1.2"/><path d="M1122.2,606.1L1128.5,600.0" stroke="#e0543f" stroke-width="1.2"/><path d="M1138.5,606.1L1144.8,600.0" stroke="#e0543f" stroke-width="1.2"/><rect x="1119.9" y="630.0" width="22.7" height="0.9" rx="0.45" fill="#b5683f" opacity="0.9"/><rect x="1135.9" y="631.1" width="6.7" height="0.9" rx="0.45" fill="#c98a66" opacity="0.9"/><rect x="1117.1" y="632.3" width="12.2" height="0.9" rx="0.45" fill="#3a1d12" opacity="0.9"/><rect x="1130.7" y="632.3" width="11.3" height="0.9" rx="0.45" fill="#c07a55" opacity="0.9"/><rect x="1094.2" y="633.4" width="12.1" height="0.9" rx="0.45" fill="#3a1d12" opacity="0.9"/><rect x="1094.0" y="634.6" width="11.6" height="0.9" rx="0.45" fill="#c07a55" opacity="0.9"/><rect x="1106.1" y="634.6" width="15.1" height="0.9" rx="0.45" fill="#8a4c28" opacity="0.9"/><rect x="1094.0" y="635.7" width="5.8" height="0.9" rx="0.45" fill="#b5683f" opacity="0.9"/><rect x="1107.4" y="635.7" width="15.2" height="0.9" rx="0.45" fill="#2a1610" opacity="0.9"/><rect x="1122.7" y="635.7" width="19.9" height="0.9" rx="0.45" fill="#c07a55" opacity="0.9"/><rect x="1096.6" y="636.9" width="17.1" height="0.9" rx="0.45" fill="#c98a66" opacity="0.9"/><rect x="1118.7" y="636.9" width="23.9" height="0.9" rx="0.45" fill="#1c100c" opacity="0.9"/><rect x="1097.9" y="638.0" width="26.8" height="0.9" rx="0.45" fill="#c07a55" opacity="0.9"/><rect x="1128.9" y="638.0" width="13.7" height="0.9" rx="0.45" fill="#8a4c28" opacity="0.9"/><rect x="1094.0" y="639.2" width="14.6" height="0.9" rx="0.45" fill="#c07a55" opacity="0.9"/><rect x="1115.5" y="639.2" width="8.7" height="0.9" rx="0.45" fill="#1c100c" opacity="0.9"/><rect x="1125.9" y="639.2" width="16.7" height="0.9" rx="0.45" fill="#c07a55" opacity="0.9"/><rect x="1116.3" y="640.3" width="21.7" height="0.9" rx="0.45" fill="#8a4c28" opacity="0.9"/><rect x="1139.5" y="640.3" width="3.1" height="0.9" rx="0.45" fill="#c98a66" opacity="0.9"/><rect x="1094.0" y="641.5" width="12.3" height="0.9" rx="0.45" fill="#b5683f" opacity="0.9"/><rect x="1107.0" y="641.5" width="20.0" height="0.9" rx="0.45" fill="#2a1610" opacity="0.9"/><rect x="1127.2" y="641.5" width="15.4" height="0.9" rx="0.45" fill="#c07a55" opacity="0.9"/><rect x="1094.0" y="642.6" width="13.3" height="0.9" rx="0.45" fill="#b5683f" opacity="0.9"/><rect x="1094.0" y="643.8" width="23.2" height="0.9" rx="0.45" fill="#1c100c" opacity="0.9"/><rect x="1118.6" y="643.8" width="15.5" height="0.9" rx="0.45" fill="#b5683f" opacity="0.9"/><rect x="1108.3" y="644.9" width="17.8" height="0.9" rx="0.45" fill="#c07a55" opacity="0.9"/><rect x="1129.9" y="644.9" width="12.7" height="0.9" rx="0.45" fill="#2a1610" opacity="0.9"/><rect x="1110.8" y="647.2" width="25.3" height="0.9" rx="0.45" fill="#c07a55" opacity="0.9"/><rect x="1136.6" y="647.2" width="6.0" height="0.9" rx="0.45" fill="#c07a55" opacity="0.9"/></g><rect x="1070.3" y="617.4" width="11.2" height="13.6" fill="none" stroke="#8f9aad" stroke-width="1.1"/><circle cx="1075.9" cy="621.5" r="1.7" fill="#8f9aad"/><path d="M1073,628.6V625.6L1074.4,624.4H1077.4L1078.8,625.6V628.6Z" fill="#8f9aad"/></svg>

</div>
</body>
</html>
